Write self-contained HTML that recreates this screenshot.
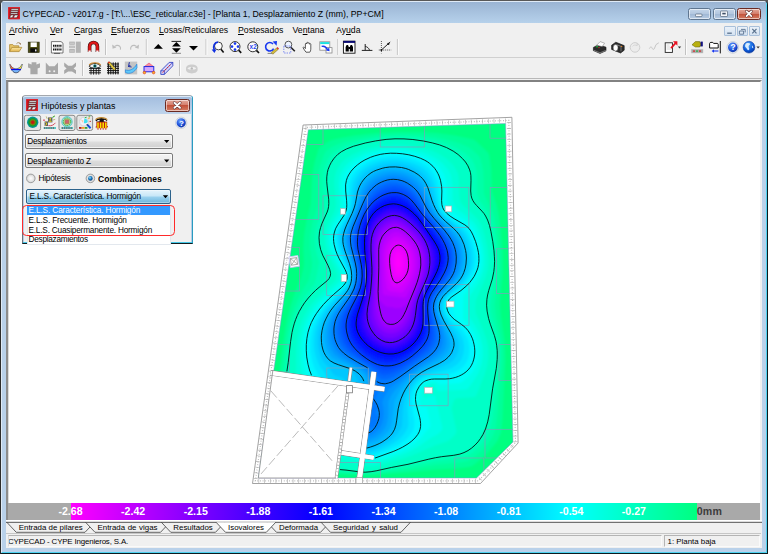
<!DOCTYPE html>
<html><head><meta charset="utf-8">
<style>
*{box-sizing:border-box;margin:0;padding:0}
html,body{width:768px;height:554px;overflow:hidden;background:#555}
body{font-family:"Liberation Sans",sans-serif;position:relative;font-size:8px;color:#000}
.abs,.mi,.sl,.tab,svg.ic{position:absolute}
#frame{left:0;top:0;width:768px;height:554px;background:#b9d1ea;border-radius:5px 5px 0 0;border:1px solid #2c2c2c;border-top-color:#585858;border-bottom-color:#0a1a1e;border-right-color:#0a1a1e}
#frame2{left:1px;top:1px;width:766px;height:552px;border-radius:4px 4px 0 0;border:1px solid #dfeaf6;border-bottom-color:#4dd2f0;border-right-color:#4dd2f0}
#titlegrad{left:2px;top:2px;width:764px;height:21px;background:linear-gradient(#9ab4d3,#b6d1eb)}
#title{left:22.5px;top:7px;font-size:8.75px;line-height:14px;white-space:nowrap;color:#000}
#menubar{left:6px;top:23px;width:756px;height:14px;background:#f0f0f0}
.mi{top:25px;font-size:8.7px;line-height:11px;white-space:nowrap;text-align:justify;text-align-last:justify;color:#000}
#tb1{left:6px;top:37px;width:756px;height:20px;background:#f0f0f0}
#tbsep{left:6px;top:57px;width:756px;height:1px;background:#d0d0d0}
#tb2{left:6px;top:58px;width:756px;height:22px;background:#f0f0f0}
#cborder{left:6px;top:80px;width:756px;height:442px;background:#fff;border-top:2px solid #828282;border-left:2px solid #8c8c8c;border-right:2px solid #f0f0f0}
#cborder2{left:6px;top:79px;width:756px;height:1px;background:#a0a0a0}
#scale{left:8px;top:503px;width:752px;height:17px;background:#a9a9a9}
#scalegrad{left:71px;top:503px;width:626px;height:17px;background:linear-gradient(90deg,#ff00ff 0%,#0000ff 40%,#00ffff 80%,#00ff80 100%)}
.sl{top:504.8px;font-weight:bold;font-size:10.6px;line-height:13px;color:#fff;white-space:nowrap;text-align:right;width:40px}
#tabs{left:6px;top:521px;width:756px;height:13px;background:#f0f0f0}
#status{left:6px;top:534px;width:756px;height:14px;background:#f0f0f0}
.vsep{position:absolute;width:1px;background:#c4c4c4;border-right:1px solid #fff;box-sizing:content-box}
.cap{position:absolute;border:1px solid #5f7690;border-radius:2.5px;background:linear-gradient(#c5d6ea 0%,#b4c8e0 45%,#9fb7d4 50%,#b9cde4 100%);box-shadow:inset 0 0 0 1px rgba(255,255,255,.55)}
.capx{background:linear-gradient(#e4a99c 0%,#d4806e 45%,#c2513a 50%,#d47d63 100%);border-color:#6b2a22}
.mdi{position:absolute;top:25.5px;height:10.5px;border:1px solid #a9c0da;background:linear-gradient(#eaf1f9,#d4e2f1);border-radius:1px}
.tab{top:523.2px;font-size:7.9px;line-height:10px;white-space:nowrap;text-align:justify;text-align-last:justify;color:#000}
.jt{white-space:nowrap;text-align:justify;text-align-last:justify}
.dt{font-size:8.25px;line-height:10px;color:#000;letter-spacing:-0.16px}
.combo{position:absolute;border:1px solid #7a7a7a;border-radius:2px;background:linear-gradient(#f4f4f4 0%,#ececec 48%,#dedede 52%,#d0d0d0 100%);box-shadow:inset 0 0 0 1px rgba(255,255,255,.7)}
.combo.hot{border-color:#2c628b;background:linear-gradient(#e6f4fc 0%,#c6e6f7 48%,#9cd2ef 52%,#6db6de 100%);box-shadow:inset 0 0 0 1px rgba(255,255,255,.35)}

</style></head><body>
<div id="frame" class="abs"></div>
<div id="frame2" class="abs"></div>
<div id="titlegrad" class="abs"></div>
<svg class="ic" style="left:7.500px;top:7.400px" width="12.200" height="12.200" viewBox="0 0 12 12"><rect x="0" y="0" width="12" height="12" rx=".8" fill="#cc141e"/><rect x=".4" y=".4" width="11.200" height="11.200" rx=".8" fill="none" stroke="#f04048" stroke-width=".5"/><g fill="#f2f6f6" stroke="#1a1a1a" stroke-width=".45" stroke-linejoin="round"><path d="M3.400 1.700h7.200l-.7 1.500H2.700z"/><path d="M3 3.800h7.200l-.6 1.400H2.400z"/><path d="M2.800 5.800h7l-.6 1.400H2.200z"/><path d="M2.900 7.900h2.800L4.100 10.600H1.500z"/><path d="M6.700 7.900h3.400L8.500 10.600H5.300z"/></g></svg>
<div id="title" class="abs">CYPECAD - v2017.g - [T:\...\ESC_reticular.c3e] - [Planta 1, Desplazamiento Z (mm), PP+CM]</div>
<div class="cap" style="left:687.5px;top:7.5px;width:23px;height:12.5px"></div>
<div class="cap" style="left:712.5px;top:7.5px;width:23px;height:12.5px"></div>
<div class="cap capx" style="left:737px;top:7.5px;width:24px;height:12.5px"></div>
<svg class="ic" style="left:687px;top:7px" width="75" height="14" viewBox="0 0 75 14"><rect x="8.5" y="7" width="6.5" height="2.6" rx=".8" fill="#f4f6fa" stroke="#55657a" stroke-width=".7"/><rect x="33.5" y="4" width="7" height="5.5" rx=".6" fill="#f4f6fa" stroke="#55657a" stroke-width=".7"/><rect x="35.3" y="5.8" width="3.4" height="1.6" fill="#3e4f66"/><path d="M59.500 4.300l4.800 4.800M64.300 4.300l-4.800 4.800" stroke="#5a3030" stroke-width="2.800" stroke-linecap="round"/><path d="M59.500 4.300l4.800 4.800M64.300 4.300l-4.800 4.800" stroke="#fff" stroke-width="1.700" stroke-linecap="round"/></svg>
<div id="menubar" class="abs"></div>
<div class="mi" style="left:9px;width:30.5px"><u>A</u>rchivo</div>
<div class="mi" style="left:50px;width:13px"><u>V</u>er</div>
<div class="mi" style="left:74px;width:27px"><u>C</u>argas</div>
<div class="mi" style="left:111px;width:37.5px"><u>E</u>sfuerzos</div>
<div class="mi" style="left:159px;width:68.5px"><u>L</u>osas/Reticulares</div>
<div class="mi" style="left:238px;width:44.5px"><u>P</u>ostesados</div>
<div class="mi" style="left:292.5px;width:32.5px">Ve<u>n</u>tana</div>
<div class="mi" style="left:336px;width:25px">Ay<u>u</u>da</div>
<div class="mdi" style="left:724px;width:11.5px"></div>
<div class="mdi" style="left:736.5px;width:11.5px"></div>
<div class="mdi" style="left:748.5px;width:11.5px"></div>
<svg class="ic" style="left:724px;top:25px" width="37" height="12" viewBox="0 0 37 12"><path d="M3.2 8.2h4.6" stroke="#5a728e" stroke-width="1.3"/><path d="M17 4.4h4.2v3M15.4 6h4.2v3.2h-4.2z" fill="none" stroke="#5a728e" stroke-width=".9"/><path d="M28.3 3.8l4.2 4.6M32.5 3.8l-4.2 4.6" stroke="#5a728e" stroke-width="1.2"/></svg>
<div id="tb1" class="abs"></div>
<div id="tbsep" class="abs"></div>
<div id="tb2" class="abs"></div>
<svg class="ic" style="left:6px;top:37px" width="756" height="42" viewBox="6 37 756 42">
<defs>
<radialGradient id="gHelp" cx=".4" cy=".3" r=".8"><stop offset="0" stop-color="#6aa0ff"/><stop offset=".6" stop-color="#1c4fd8"/><stop offset="1" stop-color="#0a2a90"/></radialGradient>
<radialGradient id="gGlobe" cx=".4" cy=".3" r=".8"><stop offset="0" stop-color="#58b0ff"/><stop offset=".6" stop-color="#0a58d8"/><stop offset="1" stop-color="#022a8c"/></radialGradient>
<linearGradient id="gFold" x1="0" y1="0" x2="0" y2="1"><stop offset="0" stop-color="#fbe9a8"/><stop offset="1" stop-color="#e2b24a"/></linearGradient>
</defs>
<!-- separators tb1 -->
<g stroke="#c2c2c2" stroke-width="1"><path d="M45.7 39v16M105.5 39v16M146.3 39v16M206 39v16M337.8 39v16M397.4 39v16M685.5 39v16M82.5 60v16M179.5 60v16"/></g>
<g stroke="#fbfbfb" stroke-width="1"><path d="M46.7 39v16M106.5 39v16M147.3 39v16M207 39v16M338.8 39v16M398.4 39v16M686.5 39v16M83.5 60v16M180.5 60v16"/></g>
<!-- open folder -->
<path d="M9.6 51.6V44.6h3.2l1 1.2h5v2" fill="#e8c66a" stroke="#a98328" stroke-width=".7"/>
<path d="M9.6 51.6l2.2-4.2h10l-2.6 4.2z" fill="url(#gFold)" stroke="#a98328" stroke-width=".7"/>
<path d="M16.5 43.6c1.2-1.2 2.6-1.2 3.6-.2" fill="none" stroke="#8a6a30" stroke-width=".7"/><path d="M19.2 43.2l1.6 0-.2 1.7z" fill="#7a4a20"/>
<!-- floppy -->
<rect x="28.2" y="42.1" width="11" height="10.4" fill="#4c4c12" stroke="#22220a" stroke-width=".6"/>
<rect x="30.6" y="42.4" width="6.2" height="4.6" fill="#fff"/>
<rect x="30.3" y="48.3" width="7" height="4" fill="#0a0a0a"/><rect x="35" y="49.4" width="1.5" height="2" fill="#e8e8e8"/>
<!-- doc icon -->
<path d="M51.4 41.6h9.6l2 1.6v9.8h-11.6z" fill="#fff" stroke="#555" stroke-width=".8"/>
<g stroke="#111" stroke-width="2" stroke-dasharray="1.300 .500"><path d="M53 45.800h8.600M53 49.600h8.600"/></g><path d="M53 47.700h8.600" stroke="#999" stroke-width=".5"/>
<path d="M54 53.4h6" stroke="#444" stroke-width=".8"/>
<!-- grey disabled icon -->
<g fill="#b4b4b4"><rect x="69.2" y="41.6" width="5.6" height="3.2"/><rect x="69.2" y="45.6" width="5.6" height="2.6"/><rect x="69.2" y="49" width="5.6" height="3.8"/><rect x="75.8" y="41.6" width="5" height="11.2"/></g>
<g stroke="#e6e6e6" stroke-width=".6"><path d="M70 43.2h4M70 47h4M70 51h4"/></g>
<!-- magnet -->
<path d="M89.6 52V46.4a3.9 3.9 0 0 1 7.8 0V52" fill="none" stroke="#3a0808" stroke-width="3.6"/>
<path d="M89.6 52V46.4a3.9 3.9 0 0 1 7.8 0V52" fill="none" stroke="#e01818" stroke-width="2.5"/>
<path d="M89.6 52.4V50.6M97.4 52.4V50.6" stroke="#f4f4f4" stroke-width="2.3"/>
<!-- undo / redo -->
<path d="M120.4 49.6c.8-2.6-1.2-4.6-3.6-4.2l-2 .8" fill="none" stroke="#bdbdbd" stroke-width="1.1"/><path d="M112.2 44.6l.4 4.2 3.8-1.2z" fill="#bdbdbd"/>
<path d="M130.8 49.6c-.8-2.6 1.2-4.6 3.6-4.2l2 .8" fill="none" stroke="#bdbdbd" stroke-width="1.1"/><path d="M139 44.6l-.4 4.2-3.8-1.2z" fill="#bdbdbd"/>
<!-- triangles -->
<path d="M158.3 44l4.6 4.8h-9.2z" fill="#000"/>
<path d="M171.5 41.4h9.6" stroke="#222" stroke-width="1"/><path d="M176.4 42l4.4 4.5h-8.8z" fill="#000"/><path d="M172 48.3h8.8l-4.4 4.5z" fill="#000"/><path d="M171.8 53.3h9.2" stroke="#8a8a8a" stroke-width="1"/>
<path d="M189 46.1h9l-4.5 4.5z" fill="#000"/>
<!-- zoom icons -->
<circle cx="218.4" cy="46" r="3.9" fill="#fdfdfd" stroke="#444" stroke-width="1"/><path d="M221 49.2l2.6 3.2" stroke="#111" stroke-width="1.6"/>
<path d="M218 42.2c-3.4.2-5.4 3.6-3.8 8" fill="none" stroke="#1030e0" stroke-width="1.7"/><path d="M211.6 49.4l4.8 0-2 3.6z" fill="#1030e0"/>
<circle cx="235" cy="46.6" r="5" fill="#fdfdfd" stroke="#333" stroke-width="1"/><path d="M238.6 50.2l2.6 2.6" stroke="#111" stroke-width="1.7"/>
<g fill="#1838f0"><circle cx="235" cy="43.6" r="1.3"/><circle cx="235" cy="49.6" r="1.3"/><circle cx="232" cy="46.6" r="1.3"/><circle cx="238" cy="46.6" r="1.3"/></g>
<circle cx="252.8" cy="46.8" r="5" fill="#fdfdfd" stroke="#333" stroke-width="1"/><path d="M256.4 50.4l2.6 2.6" stroke="#111" stroke-width="1.7"/>
<text x="249.6" y="49.2" font-size="6.4" font-weight="bold" fill="#2848f0" font-family="Liberation Sans">x2</text>
<path d="M273.6 48.6a4.2 4.2 0 1 1-.6-4.6" fill="none" stroke="#1838f0" stroke-width="1.6"/><path d="M272.6 41.4l4.4-.4-.4 4.8z" fill="#1838f0"/>
<path d="M271.4 52.6l5.2-4.6 1.4 1.6-5.2 4.6z" fill="#d8c040" stroke="#6a5a10" stroke-width=".5"/><path d="M276.6 48l1-.9 1.4 1.6-1 .9z" fill="#e02020"/><path d="M267.6 53.4h4.4" stroke="#666" stroke-width=".8"/>
<circle cx="288.4" cy="44.6" r="3.4" fill="#eef4ff" stroke="#555" stroke-width="1"/><path d="M290.8 47.2l4 4" stroke="#222" stroke-width="1.6"/>
<rect x="283.8" y="46" width="7" height="7" fill="none" stroke="#7080f0" stroke-width=".9" stroke-dasharray="1.4 1"/>
<!-- hand -->
<path d="M306 52.2c-1-1.4-2.2-3-2.8-4.2-.4-.8.6-1.4 1.2-.6l1 1.2V44c0-.9 1.2-.9 1.3 0v-1c0-.9 1.3-.9 1.4 0v.4c0-.9 1.3-.9 1.4 0v.8c0-.8 1.2-.8 1.3 0v5c0 1.400-.5 2.200-1 3z" fill="#fff" stroke="#333" stroke-width=".8" stroke-linejoin="round"/>
<!-- image icon -->
<rect x="319.8" y="41.8" width="10" height="8.400" fill="#fff" stroke="#8a8a8a" stroke-width=".8"/><rect x="320.200" y="42.100" width="9.200" height="2" fill="#18e0e0"/>
<rect x="326" y="47.600" width="6" height="5.400" fill="#fff" stroke="#8a8a8a" stroke-width=".8"/>
<path d="M321.600 46.400c2.400-.8 4.400.2 6 3.400" fill="none" stroke="#1838f0" stroke-width="1.500"/><path d="M326 50.600l3.600.6-.4-3.600z" fill="#1838f0"/>
<!-- binoculars -->
<rect x="343.400" y="41.200" width="11.600" height="12" fill="#fff" stroke="#111" stroke-width=".9"/><rect x="343.400" y="40.900" width="11.600" height="2" fill="#080870"/>
<path d="M345.600 51.400v-4.400l1-2h1.400l.8 2v4.400zM349.800 51.400v-4.400l.8-2h1.400l1 2v4.400z" fill="#000"/><rect x="348.400" y="47" width="1.800" height="2" fill="#000"/>
<!-- perp -->
<path d="M361.800 50.400h10.600M365.200 44v6.400" stroke="#222" stroke-width="1"/><path d="M365.200 46.400c2.200.4 3.800 1.800 4.400 4" fill="none" stroke="#222" stroke-width=".9"/>
<!-- dotted -->
<path d="M381.400 41v12.400M378.800 50h12.400" stroke="#444" stroke-width=".9" stroke-dasharray="1 1"/><path d="M381.400 50l8.800-8" stroke="#222" stroke-width="1"/><circle cx="388.400" cy="43.800" r="1.100" fill="#111"/><circle cx="381.400" cy="50" r="1" fill="#111"/>
<!-- printer -->
<path d="M593.400 47.400l5-2.600 7.600 2.400v3.600l-6 2.600-6.600-2.800z" fill="#2c2c2c" stroke="#111" stroke-width=".6"/><path d="M596.600 45.200l3.600-3.600 4.400 1.600-2.400 3.400z" fill="#fff" stroke="#777" stroke-width=".5"/>
<path d="M594 50.400l6 2.400 5.800-2.400" fill="none" stroke="#999" stroke-width=".7"/><circle cx="597" cy="46.800" r=".8" fill="#20e040"/><circle cx="599" cy="47.600" r=".7" fill="#f04020"/>
<!-- plotter -->
<path d="M611.600 45.200l4.200-3 8.400 3.400v4.600l-3.600 2.800-9-3.600z" fill="#2c2c2c" stroke="#111" stroke-width=".6"/><ellipse cx="615.600" cy="47.800" rx="2.400" ry="3.200" fill="#fff" stroke="#555" stroke-width=".5"/><path d="M617 44.800l4 1.600v5" fill="none" stroke="#aaa" stroke-width=".6"/><circle cx="621.600" cy="46.400" r=".7" fill="#e08020"/>
<!-- grey C -->
<circle cx="635" cy="47.400" r="4.800" fill="#ececec" stroke="#cfcfcf" stroke-width="1"/><path d="M632.600 46.400c1-1.600 3-1.800 4.400-.6M636 43.800l2 .4-1 1.600" fill="none" stroke="#cfcfcf" stroke-width=".8"/>
<path d="M649.400 48.600c.6-2 2.400-2.200 3 0 .4 1.200 1.800 1 2.200-.6l1.400-3.400 2.800-1.800" fill="none" stroke="#c6c6c6" stroke-width="1"/>
<!-- doc red arrow -->
<rect x="665.200" y="42.800" width="7.200" height="9.600" fill="#fff" stroke="#222" stroke-width=".9"/><path d="M666.600 45h3M666.600 47h3.600M666.600 49h4.400" stroke="#bbb" stroke-width=".6"/>
<path d="M671 48.200l4.600-5" stroke="#e81020" stroke-width="1.700"/><path d="M673 41.200h4.400v4.600z" fill="#e81020"/>
<path d="M677.800 46.600h3.400l-1.700 2z" fill="#333"/>
<!-- colour icon -->
<path d="M692 44.800l3.400-3.200h4.400v1.200h1.400v3.200h-1.400v1h-4.400l-3.400-2.200z" fill="#b8b010" stroke="#5a5a08" stroke-width=".5"/><rect x="700.600" y="41.600" width="2.200" height="4.800" fill="#101080"/>
<rect x="691.200" y="49.200" width="11.800" height="3.800" fill="#a8a8a8" stroke="#c8c8c8" stroke-width=".5"/><circle cx="694" cy="51.100" r=".9" fill="#e02020"/><circle cx="697" cy="51.100" r=".9" fill="#20b040"/><circle cx="700" cy="51.100" r=".9" fill="#e02020"/>
<!-- folder arrow -->
<path d="M709.600 48v-4.600c0-.6.600-1 1.200-1h2l.8 1h3.600c.6 0 1 .4 1 1v3.600z" fill="#fff" stroke="#111" stroke-width="1"/><path d="M720.300 41v12.400" stroke="#111" stroke-width="1"/><path d="M718.400 51h-5" stroke="#1838f0" stroke-width="1.100"/><path d="M711.600 51l2.400-1.800v3.600z" fill="#1838f0"/>
<!-- help -->
<circle cx="732.800" cy="47.400" r="5.900" fill="#e6ecf4" stroke="#b8c0cc" stroke-width=".6"/><circle cx="732.800" cy="47.400" r="4.800" fill="url(#gHelp)"/>
<text x="730.400" y="50.400" font-size="8.400" font-weight="bold" fill="#fff" font-family="Liberation Sans">?</text>
<!-- globe -->
<circle cx="749" cy="47.200" r="5.900" fill="url(#gGlobe)" stroke="#0a3aa0" stroke-width=".5"/>
<path d="M746 43.600c1.600-.8 3.200-.6 4.200.2-.2 1.200-1.400 1.400-1.600 2.600-.2 1.200 1 1.600.6 3-.6 1.200-1.600 1-2-.2-.4-1.400-1.800-1.600-2.200-3 .2-1.200.4-2 1-2.600z" fill="#dff0ff" opacity=".95"/><path d="M752 45.400c1 .6 1.400 1.800 1.200 3l-1.200-1z" fill="#dff0ff" opacity=".9"/>
<path d="M756.400 46.600h3.400l-1.700 2z" fill="#333"/>
<!-- TB2 -->
<path d="M9.800 64.200c.8 5.600 3.400 8.600 6.200 8.600s5.400-3 6.200-8.600c-1.600 2.600-3.600 4.800-6.200 4.800s-4.600-2.200-6.200-4.800z" fill="#78b8f8" stroke="#283050" stroke-width=".7"/>
<path d="M9.800 64.200c.4 1.800 1 3.600 1.800 5l2.400-.6c-1.800-1-3.200-2.800-4.200-4.400z" fill="#f06830"/><path d="M22.200 64.200c-.4 1.800-1 3.600-1.800 5l-2.400-.6c1.800-1 3.200-2.800 4.200-4.400z" fill="#f4e040"/>
<path d="M11 69.500h10" stroke="#0808f0" stroke-width="1.200"/>
<g fill="#a8a8a8">
<path d="M31.600 62.200h4.800v2.400l3.600-1.400v4.200l-2.400 1.200v5.600h-7.200v-5.600l-2.400-1.200v-4.200l3.600 1.400z"/>
<path d="M45.800 62.600l3.400 3.600h5.400l3.400-3.600v11.400h-12.200z"/>
<path d="M64.200 62.600l4 3.200h3.800l4-3.200v3.600l-2.400 2.400 2.400 1.600v3.800l-4-2.400h-3.800l-4 2.400v-3.800l2.400-1.600-2.400-2.400z"/>
</g>
<circle cx="49.600" cy="71.200" r="1" fill="#f0f0f0"/><circle cx="54.200" cy="71.200" r="1" fill="#f0f0f0"/>
<!-- eye grid -->
<g stroke="#111" stroke-width=".9"><path d="M89 68.400h12M89 70.600h12M89 72.800h12M91 67v7.600M93.600 67v7.600M96.200 67v7.600M98.800 67v7.600"/></g>
<path d="M89.200 66.200c2-3.600 9.400-3.600 11.400 0-2 2.600-9.400 2.600-11.400 0z" fill="#f4f4f4" stroke="#111" stroke-width=".9"/><path d="M89.200 65c2-3 9.400-3 11.400 0" fill="none" stroke="#c88020" stroke-width="1.100"/><circle cx="94.900" cy="66" r="1.700" fill="#108080"/><circle cx="94.900" cy="66" r=".8" fill="#000"/>
<!-- grid pencil -->
<g stroke="#111" stroke-width="1"><path d="M107 64h12M107 66.200h12M107 68.400h12M107 70.600h12M107 72.800h12M108.400 62.400v12M110.800 62.400v12M113.200 62.400v12M115.600 62.400v12M118 62.400v12"/></g>
<path d="M107.800 62.600l1.400-1 6.400 7.400-1.600 1.200z" fill="#e8d040" stroke="#6a5a10" stroke-width=".4"/><path d="M107.800 62.600l1.400-1 .9 1-1.500 1z" fill="#e02020"/>
<!-- blue slab -->
<rect x="124.800" y="61.600" width="12.400" height="12.800" fill="#c4c4c4"/><path d="M125.400 69.800c3.600 1.600 8.400-.4 11.400-5.600l.2 3.400c-2.400 4.800-7.400 7.200-11.600 4.800z" fill="#60c8f8" stroke="#1878d8" stroke-width=".6"/><path d="M129.400 62.200l-.8 3.600 1.800-.2M128 66.400l3.600.6" fill="none" stroke="#1020a0" stroke-width=".9"/>
<!-- trapezoid -->
<path d="M149 63l4.400 3.400h-8.800z" fill="#f890a8" stroke="#e03050" stroke-width=".5"/><rect x="144" y="66.600" width="9.800" height="5.200" fill="#d4a8fc" stroke="#1020e0" stroke-width=".9"/><circle cx="144.400" cy="72.600" r="1.300" fill="#f8c020" stroke="#e02020" stroke-width=".6"/><circle cx="153.600" cy="72.600" r="1.300" fill="#f8c020" stroke="#e02020" stroke-width=".6"/>
<!-- beam -->
<path d="M160.800 70.800l8.400-8.400h3.600v3.400l-8.400 8.600h-3.600z" fill="#d8d8f8" stroke="#2030c0" stroke-width=".8"/><path d="M160.800 70.800h3.600v3.600M164.400 70.800l8.400-8.400" fill="none" stroke="#2030c0" stroke-width=".7"/><path d="M162.600 72.600l8.400-8.600" stroke="#e02030" stroke-width=".9" stroke-dasharray="2 1"/>
<!-- grey eye -->
<path d="M186 68.400c0-2.600 2.600-4 5.800-4s5.800 1.400 5.800 4v1.400c0 2.200-2.600 3.600-5.800 3.600s-5.800-1.400-5.800-3.600z" fill="#cdcdcd"/><path d="M187.400 68.400c1.600-1.800 7.200-1.800 8.800 0-1.600 1.600-7.200 1.600-8.800 0z" fill="#f0f0f0"/><circle cx="191.800" cy="68.400" r="1.200" fill="#b8b8b8"/>
</svg>

<div id="cborder" class="abs"></div>
<div class="abs" style="left:6px;top:78px;width:756px;height:1px;background:#b8b8b8"></div><div class="abs" style="left:8px;top:82px;width:1px;height:421px;background:#dcdcdc"></div>
<svg class="ic" style="left:240px;top:105px" width="290" height="390" viewBox="240 105 290 390">
<defs><clipPath id="slab"><polygon points="308.3,129.8 505.6,123.5 513.0,442.0 476.5,478.0 258.3,478.0"/></clipPath><filter id="bl" x="-5%" y="-5%" width="110%" height="110%"><feGaussianBlur stdDeviation="0.9"/></filter></defs>
<polygon points="303.1,125.0 511.9,117.3 518.1,443.0 480.5,483.5 252.5,483.5" fill="#fff" stroke="#8c8c8c" stroke-width=".8"/>
<polygon points="305.7,127.4 508.8,120.4 515.5,442.5 478.5,480.8 255.4,480.8" fill="none" stroke="#a8a8a8" stroke-width="4.2" stroke-dasharray=".6 5.1"/>
<polygon points="305.7,127.4 508.8,120.4 515.5,442.5 478.5,480.8 255.4,480.8" fill="none" stroke="#b0b0b0" stroke-width="1.2" stroke-dasharray=".8 1.85" stroke-dashoffset="1.3"/>
<g clip-path="url(#slab)">
<rect x="240" y="105" width="290" height="390" fill="#00ff80"/>
<g filter="url(#bl)"><path fill="#00ff98" d="M395.0 132.0l22 0 19 1.1 19 2.5 18 3.7 2.9 1.7 10.5 10 1.9 2 1 2 2 14 0.7 23 4.3 12 2.6 11 1.8 14 1.9 24 0 21-2.2 21-0.3 10 0.7 10 3.8 26 0.7 19-2.8 59-1.3 13-3.7 9-6.6 8-5.9 6.2-7 6.4-5 3.9-3 1.3-11 1.4-22 1.2-30 3.1-39 3-32-1.1-2.4-0.4-4.6-1.7-12-0.4-2-1.1-7-6.5-3-2-13-0.3-2-0.3-2-1.6-8.7-10.1-0.7-1-0.5-2 1.2-10-1.6-14 0.6-9-0.1-19 1.4-11-1.1-7 5.1-38 2.8-17 3.5-14 3.4-11 7.9-20 2.4-10 0.3-3-0.6-14 0.8-15 2.4-14 4.1-16 1.6-28 1.1-8 1.4-7 3.5-12 0.8-1.7 2-1.8 9-6 10-2.6 14-2.3 23-2.6z"/>
<path fill="#00ffa8" d="M388.3 135.0l13.7-0.4 15 0.6 18 1.9 11 2.1 13 3.9 11 4.6 8.8 8.3 1.4 2 1.7 6 1.3 7 0.4 6 0.2 16 1.9 5 6.3 12 2.3 7 2.5 13 2.5 23 0.3 11-0.5 9-1.4 10-2.3 12-0.6 10 1.1 11 4.1 18 1.2 7 0.8 9 0.1 9-0.5 10-2.1 18-1.8 25-1.4 12-1.1 6-1.8 5-1.5 3-3.5 5-5.2 6-5.2 5.1-6 4.7-4 2.1-9 1.9-22 1.9-30 4.7-35 4.4-10 0.3-25-1.7-7-3.1-8-0.3-3-1-15-13.8-2-0.7-7-0.3-2-0.9-4.7-5.3-1.3-2-0.1-2 0.5-5-0.3-3-1.1-8-2.4-10-0.6-4-0.2-19 1-10-1.9-9 4.9-38 2.6-14 4.3-14 4.3-10.1 4.7-8.9 6.1-10 3-13 0.4-4-2.2-14-0.2-8 0.4-7 2.1-11 4.6-14 0.9-4 0.3-6-0.4-18 1-10 2-8 4-10 1.6-2 5.7-4.2 6-2.8 6-2 8-2 11-2 14-2z"/>
<path fill="#00ffb8" d="M392.5 137.0l14.5 0 14 1.2 14 2.3 11 3 10.8 4.5 9.5 6 6 6 2.3 5 1.5 5 0.7 5-0.1 15 0.4 4 2.9 7 7.1 10 2.2 4 1.5 4 2.9 12 2 13 0.9 9 0.3 10-0.6 9-1.3 8-3.7 15-0.8 10 0.4 6 1 6 4.9 17 1.6 7 0.9 8 0.2 9-0.7 10-2.8 19.1-3.4 30.9-2.7 12-2.2 5-3.1 5-4.6 5.7-5 4.9-6 4.3-4 1.8-8 1.9-21 2.4-29 5.8-34 5.6-11 0.5-23-2.1-2-0.6-7-3.5-6-0.5-2-0.7-18-16.9-3-2-4-0.9-1.8-1.7-1.1-2-0.1-4-0.8-5-6.2-24.3-0.4-15.7 0.7-9-2.6-11 4.8-38 2.9-13 1.9-6 2.7-6.4 4-7.6 4-6.3 9.3-11.7 1.4-4 3.5-17-0.3-2-2-6-1.4-6-0.7-7 0.1-7 0.7-5 1.2-5 5.4-14 1.1-4 0.5-7-1.2-15 0.1-9 1.5-8 3.2-8 3.1-5 3.5-3.1 5-3.3 7-3.1 9-2.7 15-3.2 11-1.6z"/>
<path fill="#00ffc7" d="M394.0 139.0l10 0 5 0.7 7 0.3 2 0.7 5 0.3 2 0.8 3 0.2 1 0.6 7 1.4 1 0.7 5 1.3 1 0.7 2 0.3 1 0.9 1 0.1 1 0.8 3 1.2 1 0.9 1 0.1 8 6 5.9 7 0.2 1 0.9 1 0.1 1 0.9 1 0.3 2 0.7 1 0.2 3 0.8 2.9 0 6.1-0.6 4 0 4 0.9 6 0.7 1 0.1 1 0.9 1 0.1 1 0.9 1 0.3 1 6.7 7 4 5 0.1 1 1.9 3 0.1 1 0.9 1 0.2 2 0.8 1 0.1 2 0.9 2 0.3 3 0.7 1.7 0.3 3.3 0.7 1.9 0.3 4.1 0.7 1.9 0.3 5.1 0.7 2.9 0 18.1-0.7 2-0.3 4-0.6 1-0.4 3-0.7 1-0.3 2-0.6 1-0.4 2.1-1.8 4.9-0.2 2-0.9 2-0.1 3-0.8 3 0 7 0.2 2 0.6 1 0.2 4 0.8 1.9 0.2 2.1 3 9 0.8 1 0.2 2 0.8 1 0.3 2 0.7 1 0.2 2 0.8 1.6 0.2 2.4 0.8 2 0.2 5 0.8 5-0.1 5-0.6 4-0.3 6.1-0.8 2.9-0.2 3.1-0.8 1.9-0.2 3.2-0.7 1.8-0.3 4-0.9 2-0.1 4-0.9 3-0.1 5-0.8 2-0.2 6-0.7 1-0.3 3-0.9 2-0.1 4-0.7 1-0.3 3.1-0.9 1.9-0.1 2-0.8 1-0.2 2-0.9 1-0.1 1.1-3 5.9-0.8 1-0.2 1-2 3-7 7-1 0.3-2 1.7-1 0.2-2.9 1.8-1.1 0.2-1 0.8-2 0.2-1 0.8-3 0.2-2 0.8-5 0.2-3 0.8-5 0.1-2.9 0.9-3.1 0.2-2 0.8-3 0.3-1 0.6-3 0.3-1.6 0.8-2.4 0.2-1 0.8-3 0.3-1 0.7-3 0.3-1 0.7-8 1.4-1 0.6-4 0.3-1.9 0.7-3.1 0.2-2 0.7-4 0.4-1 0.6-3 0.3-2 0.8-8 1.3-2 0.7-16.1 0-9.9-1.8-6.1-0.2-3.1-1-6.8-3.6-4-0.4-2.2-1-3.8-3-17-16.8-2.6-2.2-1.4-1.9-0.3-2.1-0.7-1-0.4-3-0.6-1-0.2-2-0.8-1.9-0.2-2.1-0.8-1-0.3-3-0.7-1-0.1-2-0.9-2-1.2-6-0.8-1-0.3-3-0.7-1-1-7 0-9 0.7-3 0.1-3-0.8-2-0.2-2-0.8-1.9-0.3-2.1-0.7-1-0.2-4 0.2-5 0.7-2 0.3-6 0.7-3 0.3-7 0.8-3 0.2-5.1 3-14.9 0.6-1 1.4-5 0.7-1 1.3-4 1.9-3 0.1-1 2.8-4 0.2-1 1.8-2 0.2-1 2.7-3 1.3-2 12.8-13 0.2-1 1.9-2 0.1-1 1.6-2 0.4-2 1-1-0.1-7-0.8-2-0.4-4-0.7-1-0.1-1-0.9-1-0.1-1-2.8-6-0.3-2-0.8-1.9-0.3-3.1-0.7-2 0-9 0.7-2 0.3-3.1 2-5.9 0.8-1 3.3-8 0.8-1 1-3 0.1-2 0.6-1 0.2-9-0.8-3-0.2-5-0.8-3.7 0-12.3 0.6-1 0.4-3 0.6-1 0.4-2 0.8-1 1.2-3 0.9-1 0.1-1 4.2-5 4.8-4 1-0.2 4.8-2.8 4.9-2 10.2-3 7.1-1.4 1-0.6 10-1.3 2-0.7 6-0.2z"/>
<path fill="#00ffd7" d="M386.5 145.0l10.5-0.5 12 0.8 12 2.1 11 3.4 8 3.7 7 4.6 6 5.9 3.9 6 1.2 3 0.8 4 0.5 18 0.9 5 0.9 2 1.6 2 13 12 3.8 5 2 4 1.7 5 2 7 1.9 9 1.1 12-0.1 6-0.7 5-1.2 5-1.7 5-8.8 20-0.5 10 0.7 4 6.7 15 3.7 10 1.6 8 0.3 9-1.1 9-2.4 9-6.8 17.5-2.2 4.5-0.8 0.8-2 0.5-16 1-2.2 0.7-0.7 1-2.3 7-0.1 2 4.6 21 0.2 2-0.9 2-2.7 3-3.3 3-2.6 1.5-12 3.9-14.7 6.6-10.3 4.2-9 2.9-23 6.2-6 0.9-13-1.2-9-2.5-7-1.1-9-2.6-2.6-1.8-10.8-12-9.3-7-0.8-2-1.8-11-8.2-27-2.3-9-2.2-18 0.2-20 1-12 1.7-9 2.8-9 3.8-8 3.8-6 5.5-7 6.2-6.3 12.1-10.7 2.4-3 1.3-3 0-3-1.5-5-6.7-14-1.9-5-1.5-6-0.4-6 0.4-5 1.3-5 2.1-5 5.4-10.5 1.7-5.5 0.1-6-1.3-14-0.1-6 0.7-6 1.7-5 2.9-5 3.3-3.9 4-3.4 5-3 9-3.9 8-2.6 8-1.8z"/>
<path fill="#00ffe7" d="M390.7 148.0l7.3 0 8 0.6 7 1.1 8 1.9 6 2 6 2.8 4.3 2.6 5 4 5.2 6 2.4 4 1.2 3 1.2 8 0.4 16 0.5 2 1.7 4 3.7 4 14.1 11 2.5 3 2.7 5 3.2 9 2.5 10 1 9-0.2 8-1.4 7-2.6 7-3.7 7-6.8 10-0.9 2-0.4 16 0.8 3 5.4 8 3.1 6 2.5 6 2.2 9 0.4 9-1.3 9-3.3 9-5.4 8.9-3 4.2-3 3.1-3 0.6-26 1.1-1.4-0.9-1.6-4.3-1-1-1-0.2-2 0.3-3 1.2-2 1.3-1.4 1.7-0.8 2-0.1 3 0.1 3 0.7 1 1.5 0.1 7-3 1 0 1 0.8 0.4 1.1 7.1 31-0.6 2-3.6 4-7.3 3.8-13 9.2-10 5.2-8 3.1-7 2.2-16 4.9-4 0.6-11-1.3-10-3.5-7-1.4-5-1.6-1.6-1.2-7.8-8-10.6-7.1-2.3-1.9-0.8-2-2.9-18.5-8.4-27.5-3.2-9-2.1-19 0-15 1.1-10 1.8-8 2.9-8 3.7-7 4.8-7 5.2-6 18.1-17 2.1-3 0.7-2 0.1-3-1.2-4-7.1-15-2.4-6-1.5-6-0.4-6 0.5-5 1.4-5 2.3-5 5.7-10 1.7-5 0.3-6-1.2-13-0.1-6 0.8-6 1.7-5 3.1-5 3.7-4 4.9-3.7 5.8-3.3 6.2-2.7 9-2.9 9-1.7z"/>
<path fill="#00fff7" d="M387.1 151.0l7.9-0.3 7 0.4 7 1 7 1.6 6 1.9 5.6 2.4 4.4 2.6 4.3 3.4 5.2 6 2.3 4 1.6 4 1.3 9 0.2 14 0.8 3 2.2 5 1.7 2 3.4 2.8 11 7.3 3.7 2.9 2.7 3 2.8 5 3 8 2.4 9 1 8-0.3 8-1.7 7-3.3 7-4.7 7-7.9 9-0.4 3-0.3 19 0.3 2 0.7 1 6.4 7 2.6 4 2.4 5 1.8 5 0.9 4 0.5 9-1.3 8-1.4 4-2 4-2 3-2.9 3.3-7 5.8-3 1.2-18 1.3-2-0.7-2-2-2-0.4-3 0.1-3 0.8-3 1.3-2 1.4-2 2.2-1.3 2.7-1.2 6-0.2 3 0.4 3 1.3 3.9 1 1 4-0.2 1 1.3 3.7 17-1.1 3-3.6 3.5-5.8 7.5-4.2 3.7-4 2.8-10 5.4-9 3.5-16 5.4-4 0.5-10-0.7-9.2-4.6-7.8-2.4-6.9-5.6-13.8-9-2.3-2-0.8-2-3.6-24-6.2-20-5.2-12-0.9-3-2.5-16-0.4-13 0.9-9 1.8-8 2.5-7 3.6-7 3.3-5 4.8-6 6.7-7 13.2-12 2.3-3 1.4-3 0.3-3-1-4-7.8-16-2.7-7-1.4-6-0.3-5 0.6-5 1.5-5 2.1-4 6.1-10 1.9-5 0.4-6-1-12-0.2-6 0.6-5 1.5-5 2.9-5 3.4-4 4.2-3.5 5-3.2 6-3 7-2.6 7-1.7z"/>
<path fill="#00f7ff" d="M382.8 154.0l7.2-0.7 6 0 8 0.7 6 1.1 7.2 1.9 5.1 2 5.6 3 3.8 3 3.3 3.6 2.9 4.4 3.1 7.9 1.1 7.1 0.3 15 2.1 6 2.1 3 3.3 3 14.1 8.9 4 3.1 3 3.8 2 3.8 3 7.4 2.1 8 0.9 9-1 8.5-2 5.7-4 6.9-5 5.9-7.9 7-2.9 4-3 6-0.2 5 0.1 2 1.3 4 2.9 6 1.7 2 7 6 3 3.9 2 3.4 1.9 4.7 1.1 4 0.6 9-0.6 5.2-1.1 3.8-1.9 4-3 4-5 4.1-6 3-8 1.8-6 0.4-9-0.2-5 0.7-4 1.6-2 1.4-3.8 4.2-1.6 3-1.3 4-0.5 6 1.6 9 2.6 8 0.9 8-0.9 4.8-1 2.5-3 4.5-3 3.2-5.2 4-4.8 3-11 5-17 6-10 0-3.6-1-10.1-6-21.5-14-2.1-2-0.7-2-3.5-25-1.1-5-3.7-12-8.6-19-2.1-7.7-1.4-10.3-0.2-10 0.6-6.5 2-8.9 3-7.6 3.9-7 5.1-7 5-5.5 16.5-15.5 2.5-3.5 1.3-3.5 0.2-3-0.9-4-7.5-15-3.1-8-1-4-0.6-6 0.6-6 1-3.3 2.9-5.7 5.8-9 2-5 0.8-6-1-18 0.5-4.4 1-3.6 2-4 2.9-4 4-4 3.9-3 4.9-3 6.6-3 6.5-2z"/>
<path fill="#00e7ff" d="M386.4 157.0l5.6-0.4 6 0.2 6 0.7 6 1.2 6 1.9 5 2.1 4 2.3 4 3.1 2.6 2.9 2.1 3 3.2 7 1.6 7 1.4 16 0.8 3 1.4 3 2.2 3 3.7 3.6 13.8 9.4 3.7 3 3.1 4 2.5 5 3 9 1.6 9-0.3 8-1.8 7-3 6-4.6 6.1-5.1 4.9-9.9 7.5-3 3-2.1 3.5-0.9 4 0.3 3 0.7 2.5 3 5.6 3 3.4 10 9.2 3.7 5.3 1.8 4 1.2 4 0.6 4 0 5-1.1 6-2.2 4.9-3 3.8-4 3.2-5 2.6-4.8 1.5-5.2 0.9-11 1.2-6 1.6-3 1.4-2.7 1.9-4.3 4.6-2.1 3.4-1.6 4-1.3 7 0.3 8 2.1 13-0.2 6-0.9 3-1.3 2.5-4.6 5.5-3.4 3-5 3.4-11.1 5.6-13.9 5.2-9 0.3-3-0.9-7.2-4.6-1.8-1.6-2.4-3.4-13.8-9-1.8-1.4-1-1.6-5.5-37-1.5-4-8-16-4-6.8-2-5.2-1.5-6-1-6-0.3-6 0.2-6 1-7 1.6-6 2.4-6 3.3-6 4.2-6 5-6 16.1-15.8 2.2-3.2 1.6-4 0.3-4-0.7-4-1.4-3.8-5.8-12.2-2.3-6-1.6-6-0.4-6 0.7-5 1.3-4 8.1-14 2.2-6 0.7-6-0.1-15 0.4-4 1.2-4 2-4 2.9-4 4.1-4 4.6-3.4 5-2.8 5-2 6-1.7z"/>
<path fill="#00d7ff" d="M383.0 161.0l6-0.8 7-0.1 6 0.6 6 1.2 6 1.9 6 2.7 4 2.6 4 3.7 3 4.2 2.7 6 1.6 6 2.5 15 0.9 3 2 4 2.3 3.2 3.9 3.8 10.8 8 4.8 4 2.5 3 2 3.3 2.5 5.7 2 7 0.9 6 0.2 6-0.7 5-1.1 4-1.7 4-2.3 4-3 4-3.8 4-10 8.1-3 2.9-2.7 4-1.1 4 0.3 5 2.5 6.2 3 4.6 9.8 11.2 2.5 4 1.3 3 1.3 5 0.2 5-0.7 5-2 5-1.4 2.2-2.5 2.8-5.5 3.7-7 2.6-12 2.7-6 2-5 2.6-4.2 3.4-2.6 3-2.7 4-2 4-1.6 5-1 6-0.3 5 0.8 16-0.8 4-2.2 4-3.1 4-4.3 4-4.3 3-5.2 3-7.5 3.5-8 3-3 0.4-4 0.1-3-0.7-6.2-4.3-1.7-2-1.1-3.5-1-1.4-10.6-7.1-1.5-2-3.9-27 0-10-0.6-6-1.4-1.7-3-1.4-1-0.9-7.3-14-3.4-4-2.1-4-2.2-5.9-1.4-6.1-0.6-6 0.1-6 0.7-6 1.5-6 2.4-6 3.2-6 4-6 4.2-5 14.9-15.4 2.3-3.6 1.5-4 0.6-5-0.8-5-8.7-22-1.4-6-0.3-5 0.6-4 1.2-4 7.8-15 2.3-6 1-6 0.6-13 0.9-5 0.9-3 2.1-4 2.4-3.3 3-3.2 4-3.2 4-2.5 4-1.9 5-1.7z"/>
<path fill="#00c7ff" d="M386.1 164.0l5.9-0.5 5 0 5 0.6 6 1.4 5 1.8 5 2.6 4 2.8 3.5 3.3 2.5 3.6 2.2 4.4 1.8 5.4 3.6 14.6 1.6 4 2.1 4 2.7 3.5 3 3.1 10.3 8.4 4.3 4 2.5 3 2.4 4 2.2 5 1.7 6 0.9 6 0.1 6-0.6 5-1.1 4-1.6 4-2.3 4-4.8 6-11 9.6-3 3.2-2.6 4.2-1.1 4 0 3 0.5 3 2.2 5.7 3 5.3 8.5 12 2.6 6 0.8 4-0.1 4-0.7 4-1.7 4-3.1 4-4.3 3.4-6 2.9-11 3.9-7 3-5 3-5 4.4-2.9 3.4-2.7 4-2.5 5-1.9 5-1.3 5-0.7 5-0.9 17-1 3-2.9 5-2.5 3-3.1 3-7.6 5.1-6 2.9-6 2.4-3 0.8-4 0.1-2-0.6-5.1-3.7-1.4-2-1.6-6-0.9-1.2-5.6-3.8-1.6-2-2.6-18 0.8-15-1.5-18-0.5-1-1-0.8-8-2.8-2-1.2-4.3-7.2-3.7-3.4-2-2.7-2.5-4.9-1.8-6-0.9-6 0-7 0.6-5 1.2-5 1.8-5 3-6 3.1-5 3.8-5 14.7-16 2.4-4 1.4-4 0.7-5-0.5-6-1.5-5-6.7-18-1-5-0.2-5 0.8-5 1.3-4 6.9-14 2.3-6 1.2-5 1.6-13 1.9-7 2.2-4 2.2-3 3-3.2 4-3.2 4-2.3 4-1.8 5-1.5z"/>
<path fill="#00b7ff" d="M389.7 167.0l5.3-0.2 5 0.4 5 1.1 4 1.3 4 1.8 4.4 2.6 3.6 3 2.8 3 2 3 1.9 4 5.7 17 4 8 2.6 3.7 3 3.3 13.2 12 3.2 4 2.4 4 2.1 5 1.7 6 0.8 6-0.1 6-1.5 8-3.2 7-4.6 6-10 9.4-3.4 3.6-2.6 4-1.3 4 0 5 1.5 6 2.8 6.1 7.4 12.9 2.2 6 0.5 4-0.3 3-0.8 3-1.4 3-2.9 4-3.7 3.2-5 3-18 8.9-5.4 3.9-5.2 5-3.2 4-3.3 5-2.5 5-2 5-2.2 9-2 15-1.1 4-2 4-4.3 5-6.8 4.9-7 3.4-5 1.7-3 0.5-3-1.2-3.7-3.3-2.2-9-3.5-4-0.6-3-0.5-6 0.9-20 3.6-18 0.1-2-0.4-2-2-4-3.2-4-3.7-2-12.8-4.5-5.7-3.5-3.1-3-2.6-4-2.2-6-1-6 0-7 0.7-5 1.3-5 1.9-5 2.6-5 6.2-9 9.9-10.9 3-3.9 2.4-4.2 1.4-4 0.9-6-0.6-7-1.3-5-6.1-18-0.8-5-0.1-4 0.6-4 1.5-5 6.9-15 2.3-6 3.3-16 1.6-4.7 2.2-4.3 2.8-3.9 3-3.1 3.9-3 4.1-2.3 4-1.5 5-1.4z"/>
<path fill="#00a7ff" d="M392.4 170.0l8.6 0.7 8 2.4 7 4 3.4 2.9 2.6 3 3.5 6 6.1 16 4.4 8 5 6.2 13 12.8 3.1 4 2.4 4 2.1 5 1.5 6 0.7 6-0.2 6-1.8 8-2.9 6-3.7 5-9.2 9.2-4 4.5-2.6 4.3-1.2 4-0.1 5 1.3 6 2.6 6.3 5.7 11.7 2.2 7 0.3 3-0.2 2.7-1.9 5.3-2.9 4-3.2 3-6.3 4-16.7 9.3-6 4.7-6 6-7 9-5.5 10-2.6 21-1.4 5-2.1 4-4.6 5-5.8 4.1-4.1 1.9-5.9 1.4-2 0.2-2-1-1.4-1.6-2.5-11-2.3-26 0.3-3 1.2-4 7-15 0-2-1.4-3-1.9-2.5-5-4.2-6-3.3-15-6.4-4-2.4-2.3-2.2-3.2-5-2-6-0.9-6 0.2-7 1.8-8 3.9-9 5.3-8 9.2-10.7 3-4 2.3-4.3 1.8-5 0.8-6-0.4-7-1.5-6.3-5.3-16.7-0.9-5 0.1-5 0.7-4 1.6-5 8.6-20 5.1-18 2.1-4.2 2.7-3.8 3.3-3.4 4-3 4-2.2 5-1.8 5-1.1z"/>
<path fill="#0097ff" d="M385.6 174.0l4.4-0.7 5-0.2 5 0.6 4 1 4 1.5 4 2.2 4 2.9 3 2.9 4.5 6.8 5.9 14 4.6 8 5 6.4 13 13.6 4.8 7 2.2 5 1.6 6 0.7 6-0.1 5-1.6 8-2.6 6-3.5 5-9.5 10.1-3.3 3.9-2.7 4.7-1.3 4.3-0.2 5 1 5 6.9 18 1.7 6 0.3 6-1.6 5-2.8 4.1-4.2 3.9-5.9 4-12.9 7.6-8.4 6.4-7.6 7-9.7 10-3.9 7-1.1 3 0.1 10-0.4 6-1.3 6-1.7 3.9-4 5.1-5 4-4 1.9-5 0.8-1-0.2-1.4-1.5-2.3-8-1.6-18-0.1-5 0.6-5 1.8-7 3.5-8 3-5 0-2-1.5-3-2-2.9-1.8-2.1-2.5-2-6.7-4.1-15.8-7.9-5.2-4-3-4.5-2.1-5.5-1-6 0-6 1.4-8 3.1-8 5-8 11.7-15 2.6-5 1.8-6 0.7-6-0.5-7-1.4-6-4.3-14-1.3-7 0.3-7 2-7 7.7-18 5.7-17 3.3-6 4.3-5 4-3.2 5.3-2.8z"/>
<path fill="#0087ff" d="M386.7 177.0l4.3-0.7 4-0.1 4 0.5 4.8 1.3 4.2 1.8 4 2.5 3 2.4 3 3.1 3.5 5.2 6.2 13 4.2 7 5.1 6.4 12.3 13.6 4.8 7 2.3 5 1.7 6 0.6 5 0 6-1.3 7-2.9 7-3.5 5-11.3 13-2.9 5-1.4 4-0.4 5 0.6 5 5.9 18 1.2 6 0 6-1.7 5-3.7 5-4.5 4-18.3 12-16.5 13.2-9 6.6-5.6 10.2-1.1 3 1.1 6 0.4 6-0.7 6-1.7 5-2.5 4-3.7 4-3.2 2.1-4 0.9-1-0.2-1-0.9-2-5.9-0.8-15 0.1-4 0.9-7 2.5-10 2.1-5 4-6-0.1-2-2.8-5-4.1-5-6.2-4-15.9-9-4.2-3-3-3-2.5-4-2-5.4-1-5.6 0-6 1.2-7 2.7-7 4.2-7 8.3-11 3.2-5 2.4-5 1.8-6 0.6-7-0.5-7-1.3-6-4-14-1.1-7 0.4-6 2.2-8 6.9-16 5.4-14 1.9-4 2.5-4 3.6-4 4.6-3.6 5-2.6z"/>
<path fill="#0078ff" d="M387.8 180.0l7.2-0.6 4 0.5 4 1.2 4 1.8 4 2.6 5.9 5.5 3.1 4.4 6 11.6 3.8 6 4.8 6 11.4 13 5.5 8 2.4 5 1.5 5 0.9 6 0 5-1 7-2.7 7-3.2 5-11.4 14-2.8 5-1.3 4-0.4 5 0.5 4.7 4.8 17.3 0.8 5-0.2 6-2.1 6-1.9 3-2.4 2.8-6.3 5.2-11.7 7.8-19 13.6-5 2.7-5.4 1.9-3.8 2-6.5 12 0.6 4 1.4 4 0.3 2-0.6 2.4-1.3 1.6-0.2 1 1.5 1.4 1 2 0 3.6-1 3-2 3.3-2 1.5-3 1-1-0.2-2-2.7-1-1.9-0.4-2 0-3 0.4-2 1-1.8 2.6-2.2-2.6-3.9-0.2-4.1 1.2-3.5 3-3.5-0.3-4 0.3-3.1 1-1.9 4.6-5 0.4-1-0.5-2-3.2-6-5.3-6.3-20.6-12.7-4.4-3.4-3.4-3.6-3-5-1.7-5-0.9-5 0-6 1.1-6 2.2-6 3.5-6 11.2-16.7 2.4-5.3 1.6-6 0.7-7-0.5-7-1.1-6-3.7-14-1-7 0.3-6 2.2-8 11.1-26.3 2.4-4.7 2.6-3.9 3.6-4.1 4.4-3.4 5-2.7z"/>
<path fill="#0068ff" d="M389.6 183.0l3.4-0.3 4 0.2 7 2 6.9 4.1 5 5 2.9 4 5.6 10 3.3 5 16 19 5.5 8 2.4 5 1.6 5 0.9 5 0.1 5-0.9 7-2.6 7-3.7 6-10.1 13-2.8 5-1.4 4-0.7 5 0.3 5 4 18 0.5 5-0.6 6-2.2 5.3-3.5 4.7-4.4 4-22.1 15.5-7 4.3-5 2.6-4 1.3-4 0.5-3-0.5-2-0.9-1-0.9-2.5-3.9-6.1-6-16.1-10-5.3-3.9-3.4-3.1-3.1-4-2.5-5-1.6-6-0.4-6 0.9-7 2.1-6 3.2-6 10.5-17 2.2-5 1.5-6 0.7-7-0.5-7-4.6-20-0.8-7 0.5-7 2.2-8 9.1-21.1 3.9-6.9 2.9-4 4-4 4.2-3 5-2.5z"/>
<path fill="#0058ff" d="M392.4 186.0l3.6 0 3 0.5 6 2.2 5 3.1 5 5 10.6 16.2 15.2 18 5.6 8 2.6 5 1.9 5 1 5 0.3 6-1.1 7-2.7 7-3.8 6-9.6 13-2.2 4-1.4 4-0.8 5 0.1 5 2.8 16 0.6 7-0.8 6-2.2 5-2.9 4-4.2 4-7.7 6-10.3 7.1-6 3.4-7 3.3-5 1.6-4 0.3-2-0.3-2-0.9-3-3.3-3-1.9-2.4-2.3-14.3-9-6.4-5-3.1-3-3.8-5-2.2-5-1.4-6-0.3-6 0.7-5 1.8-6 3-6 9.7-17 2-5 1.5-6 0.6-6-0.3-7-1-6-3.3-14-0.9-8 0.8-8 2.6-9 3.7-9.2 4-8.2 4-6.4 3-3.7 4-3.8 5-3.3 6-2.5z"/>
<path fill="#0048ff" d="M388.3 190.0l6.7-0.7 6 1 3 1.2 4 2.3 5 4.5 10.5 14.7 14.4 17 5.8 8 3.2 6 1.9 5 1.1 5 0.3 5-1 7-2.7 7-3.4 6-9.8 14-2.1 4-1.2 3.5-0.8 4.5 0 5 2 16 0.3 6-0.8 6-2.1 5-2.8 4-4.9 5-6.9 5.7-7 4.8-6 3.3-6 2.5-5 1.4-5 0.6-3-0.5-15.2-8.8-7.2-5-7-6-4.2-5-2.7-5-1.9-6-0.7-7 0.5-5 1.6-6 2.6-6 9.2-17.2 2.1-5.8 1.3-6 0.4-6-0.3-6-4.1-20-0.7-7 0.6-8 2.2-9 2.6-7 2.9-6.2 3-5.3 4-5.4 4-4 4-3 5-2.7z"/>
<path fill="#0038ff" d="M389.4 193.0l5.6-0.5 6 1 6 3 5.2 4.5 10.8 14 13 15.3 5.5 7.7 3.3 6 1.9 5 1.1 5 0.3 5-0.8 6-2.5 7-3.9 7-8.9 13.3-2 3.8-1.3 3.9-0.7 4-0.2 5 1.3 16 0.1 6-1.1 6-2.3 5-2.9 4-4.8 5-5.1 4.4-6 4.2-5 2.8-6 2.3-5 1.1-5 0.3-3-0.3-5-1.4-7-3.3-7.7-5.1-7.3-6.3-4.6-5.7-3.1-6-1.7-6-0.5-7 0.5-5 1.4-5 2.1-5 8.4-17 2-6 1.2-6 0.4-6-0.3-6-3.6-19-0.8-8 0.8-9 2.3-9 2.5-6.7 2.6-5.3 3.2-5 3.2-3.8 4-3.7 4-2.7 5-2.5z"/>
<path fill="#0028ff" d="M389.0 196.0l4-0.6 3 0 6 1.5 6 3.4 5 4.8 19.6 23.9 7.2 10 2.8 5 2 5 1.2 5 0.3 4-0.9 7-2.5 7-3.8 7-8.3 13-3 7-0.8 4-0.3 4 0.9 17-0.1 6-1 5-2.1 5-3.2 4.7-4 4.3-5 4.3-5 3.6-5 2.6-5 2-5 1.1-5 0.3-6.7-0.9-6.3-2.4-7.6-4.6-7.4-6.2-4.2-4.8-3.5-6-1.9-6-0.8-7 0.5-5 1.3-5 9.6-22.1 1.8-5.9 1.1-6 0.4-6-0.3-6-3.2-19-0.6-7 0.6-9 2.2-9.5 4-9.7 3-4.9 3.2-3.9 3.8-3.5 4-2.8 4-2.1z"/>
<path fill="#0018ff" d="M388.1 199.0l3.9-0.7 3-0.1 6 1.3 6 3.1 6 5.3 12.7 15.1 12.4 17 2.8 5 1.6 4 1.2 5 0.4 4-0.7 6-2.3 7-3.6 7-8.4 14-2.8 7-1 8 0.6 15-0.2 6-1.2 6-2.2 5-2.7 4-3.6 4-4 3.6-5 3.5-4 2.2-5 2-5 1.2-5 0.4-6.9-0.9-6.1-2.3-6.5-3.7-6.5-5.2-5-5.6-3.1-5.2-2.1-6-0.7-6 0.4-5 1.2-5 8.4-21 1.9-7 1-6 0.4-6-0.2-6-2.6-18-0.7-8 0.5-8 1.9-9 1.7-5 2.3-5 2.7-4.3 3-3.6 3-2.8 4-2.8 4-2.1z"/>
<path fill="#0008ff" d="M387.2 202.0l6.8-0.9 6 1 6 2.8 7 5.5 5 5.5 4.9 6.1 14.1 20 2.2 4 1.5 4 1 4 0.3 4-0.7 6-2.2 7-3.5 7-7.5 13-2.8 7-0.9 4-0.3 4 0.4 15-0.3 5-1.2 6-2 4.9-2.6 4.1-3.4 4-4 3.6-4 2.8-4 2.3-4 1.6-5 1.2-4 0.4-7-0.6-6-2-6-3.1-6-4.5-5-5.3-3.5-5.4-2.2-6-0.6-5 0.1-4 1-5 7.7-22 1.8-7 0.9-6 0.3-6-0.1-6-2.2-18-0.5-8 0.5-8 1.6-8 3.2-8.5 2-3.5 3-3.9 3-3 4-2.9 4-2.1z"/>
<path fill="#0c00ff" d="M391.3 204.0l3.7 0 3 0.4 6 2.2 6 3.8 6 5.7 7.1 8.9 12.7 19 3.1 7 1 7-0.7 6-2.2 7-2.7 6-7.6 14-2.7 7-1.2 8-0.1 18-1.2 6-2 5-2.4 4-3.1 3.7-3.4 3.3-4.1 3-4.5 2.4-4 1.5-4 0.8-4 0.3-6-0.6-6-1.9-6-3.1-5.7-4.4-4.5-5-3.1-5-1.8-5-0.7-6 1.2-8 6.3-20 1.6-7 0.9-6 0.4-12-1.9-19-0.3-8 0.6-8 1.7-8 1.3-4 2.4-5 2.6-3.8 3-3.1 3-2.4 4-2.3 4-1.6z"/>
<path fill="#2300ff" d="M390.4 207.0l3.6-0.2 3 0.3 6 2 6.4 3.9 6.6 6.2 8 10.3 8.8 13.5 2.1 4 1.5 4 1 7-0.5 6-2 7-2.9 7-7.2 14-2.4 7-1.1 7-0.5 17-1.1 5-2 5-2.3 4-2.4 3-3 3.1-4 3-4 2.3-4 1.5-4 0.9-4 0.3-6-0.7-5-1.6-5.2-2.8-5.2-4-4.4-5-2.9-5-1.7-5-0.5-5 0.7-7 5.7-21 2-12 0.4-12-1.6-19-0.2-7 0.5-8 1.4-6.8 3-7.7 2.2-3.5 2.8-3.4 3-2.7 4-2.5 4-1.6z"/>
<path fill="#3900ff" d="M390.1 210.0l5.9-0.1 3 0.6 4 1.6 7 4.6 6 5.8 8 10.1 6.5 10.4 3.3 8 0.8 4 0.3 4-0.7 7-2 7-2.4 6-6.3 13-2.5 7-1.2 6-1.1 17-1.2 5-1.6 4-2.3 4-2.4 3-3 3-3.2 2.4-3 1.8-4 1.7-4 1.1-4 0.3-5-0.6-5.1-1.7-5.2-3-4.6-4-3.3-4-2.8-5-1.6-5-0.4-5 0.8-8 4.5-19 1.6-12 0.3-12-1.5-24 0.4-7 1.1-6 3.1-8 2.5-4 2.2-2.6 3-2.7 3-2 3.5-1.7z"/>
<path fill="#4f00ff" d="M389.9 213.0l3.1-0.4 3 0.1 3 0.7 4 1.7 7 4.8 7 6.9 7 8.9 4.7 8.3 2.8 8 0.9 8-0.7 7-1.8 7-2.2 6-6 13-2.5 7-1.1 6-1.5 15-1 4-1.6 4.1-4 6.2-3 3.1-3 2.4-3 1.8-4 1.7-4 0.9-3 0.2-5-0.6-4.7-1.8-4.3-2.8-4-3.7-3.3-4.5-2.4-5-1.3-5-0.4-5 0.8-8 3.8-18 1-10 0.3-13-1.1-23 0.3-6 0.9-5 1.3-4 1.8-4 4.3-5.9 3-2.7 3-2.1z"/>
<path fill="#6400ff" d="M390.0 216.0l3-0.5 3 0.1 3 0.7 4 1.8 7 5 8 7.9 5.3 7 3.6 7 2.3 8 0.7 8-0.6 7-1.6 7-1.8 5-6.5 15-2 6-2.8 18-1 4-1.6 4.1-4 6.2-5 4.6-6 3.1-3.5 1-3.5 0.3-4-0.5-4.6-1.8-4.3-3-2.9-3-2.8-4-2.3-5-1.4-5-0.4-5 0.6-8 2.7-15 1.1-11 0.3-13-0.9-22 0.2-5 0.8-5 2.6-7 4.2-6 5.1-4.3 3-1.7z"/>
<path fill="#7700ff" d="M390.4 219.0l2.6-0.5 3 0.1 3 0.7 3 1.3 7 4.8 8 7.9 4.9 6.7 3.1 6.4 2 7.6 0.6 8-0.6 7-1.3 6-2.1 6-7.4 18-1.6 6-2.6 13-2.1 6-3.8 6-4.3 4-5.8 3-3 0.8-3 0.2-4-0.6-3.2-1.4-3.8-2.7-2.9-3.3-2.5-4-1.7-4-1.2-5-0.3-5 0.3-6 1.8-15 0.9-13 0.2-12-0.7-19 1-9 2.1-6.1 3.9-5.9 5.1-4.5z"/>
<path fill="#8a00ff" d="M390.9 222.0l2.1-0.5 3 0 3 0.7 3 1.3 6.4 4.5 7 7 4.4 6 2.9 6 2 7 0.6 8-0.7 8-1.7 7-8.6 22-4.8 17-1.9 5-3.1 5-4.1 4-4.4 2.4-5 1.1-4-0.5-3-1.3-3-2.3-3-3.5-2.1-3.9-1.3-4-0.9-5-0.2-6 1.8-35-0.4-25 0.9-7 2.1-6 3.1-5 5-4.6z"/>
<path fill="#9c00ff" d="M391.5 225.0l2.5-0.5 3 0.1 5 1.9 6 4.4 6 6.1 4.3 6 2.7 6 1.5 6 0.6 7-0.7 8-1.9 8-8.9 23-5.6 16.1-2.9 4.9-3.1 3.3-4 2.5-5 1.1-4-0.7-3-1.7-2.4-2.5-2.4-4-1.4-4-1-5-0.5-6-0.1-9 0.9-27-0.3-19 0.9-8 2-6 3.3-5 4-3.7z"/>
<path fill="#ad00ff" d="M392.8 228.0l4.2-0.3 4 1.4 4.3 2.9 5.7 5.3 3.7 4.7 2.8 5 1.8 5 1.1 6 0.2 6-0.6 6.3-1.5 6.7-2.5 7.4-7 16.7-1 1.6-2 1.9-5 3.3-7 0.1-1-1-6 0-1-1-1 0-0.4-1-0.6-0.1-0.5-0.9-0.5-0.1-3-3.7-1-2.2-0.3-2 0.4-29-0.2-15 0.8-8 1.6-5 3.1-5 4.3-4z"/>
<path fill="#bd00ff" d="M394.9 232.0l3.1 0.1 3 1.2 4 2.7 5 4.7 2.6 3.3 2.2 4 1.5 4 1.1 5 0.3 5-0.3 6-0.8 5-1.4 5-3.2 7.7-5 9.5-1.1 1.8-1.9 0.8-19-2.6-1.8-1.2-0.6-2-0.7-12-0.4-22 0.1-6 0.7-5 1.7-5.4 3-4.6 4-3.5z"/>
<path fill="#cc00ff" d="M394.0 237.0l3-0.5 3 0.7 4 2.4 3.8 3.4 2.4 3 2.2 4 1.3 4 0.7 4 0.3 5-0.3 5-0.9 5-1.3 4-2.2 4.7-3 4.9-4 5.3-2 0.8-10-1.3-3-1-1.2-2.4-1.5-9-1.1-19 0.1-5 0.6-5 1.2-4 2.1-4 2.8-3.1z"/>
<path fill="#d900ff" d="M394.2 242.0l1.8-0.8 3 0 3 1.3 3.4 2.5 2.5 3 1.6 3 1.2 4 0.7 4 0.2 5-0.2 4-0.8 4-1.5 4-2.1 3.9-2.3 3.1-3.7 3.5-2 1-3-0.1-3-0.6-1.9-1.8-2.2-6-1.3-8-0.7-11 0.8-8 0.9-3 1.4-2.7 2-2.5z"/>
<path fill="#e500ff" d="M395.6 246.0l2.4-0.8 2 0.2 2 1 2 1.7 1.5 1.9 1.5 3 1.6 8-0.3 7-0.9 4-1.3 3-1.9 3-2.2 2.3-2 1-2 0.4-2-0.4-2-1-2-2.7-1.2-4.6-1.2-9 0-6 0.9-5 1.9-4z"/>
<path fill="#ef00ff" d="M396.9 249.0l1.1-0.3 2 0.3 1.5 1 1.5 1.8 1.4 3.2 1.5 7-0.1 4-2.2 7-2.6 3.7-2 0.8-3-0.6-1-0.6-0.9-1.3-2.2-11 0-4 1.1-6 1.5-3z"/>
<path fill="#f800ff" d="M396.6 253.0l1.4-0.8 1 0.2 1 0.6 1.1 2 2.2 7-0.3 4-2.4 6-1.6 1.8-1 0.2-1-0.4-1-1.7-1.6-5.9-0.4-3 0.2-3 1-4z"/>
<path fill="#fe00ff" d="M397.4 259.0l0.6-0.9 1 0.4 1.3 2.5 0.4 2-0.7 2.7-1 1.6-1 0.3-1-1.5-0.7-3.1 0.3-2z"/></g>
<rect x="323.0" y="195.8" width="44.3" height="38.7" fill="none" stroke="#7f9fb8" stroke-width=".7"/>
<rect x="326.7" y="255.3" width="38.6" height="40.1" fill="none" stroke="#7f9fb8" stroke-width=".7"/>
<rect x="424.3" y="187.3" width="44.6" height="40.1" fill="none" stroke="#7f9fb8" stroke-width=".7"/>
<rect x="424.1" y="284.6" width="44.9" height="40.7" fill="none" stroke="#7f9fb8" stroke-width=".7"/>
<rect x="409.4" y="374.2" width="38.7" height="31.6" fill="none" stroke="#7f9fb8" stroke-width=".7"/>
<rect x="380.2" y="120.0" width="44.2" height="27.0" fill="none" stroke="#7f9fb8" stroke-width=".7"/>
<rect x="300.0" y="128.0" width="23.0" height="16.4" fill="none" stroke="#7f9fb8" stroke-width=".7"/>
<rect x="290.0" y="174.6" width="28.8" height="44.8" fill="none" stroke="#7f9fb8" stroke-width=".7"/>
<rect x="490.0" y="118.0" width="30.0" height="20.2" fill="none" stroke="#7f9fb8" stroke-width=".7"/>
<rect x="490.2" y="187.5" width="29.8" height="39.8" fill="none" stroke="#7f9fb8" stroke-width=".7"/>
<rect x="270.0" y="344.7" width="19.5" height="27.3" fill="none" stroke="#7f9fb8" stroke-width=".7"/>
<rect x="496.4" y="248.8" width="23.6" height="44.6" fill="none" stroke="#7f9fb8" stroke-width=".7"/>
<rect x="499.0" y="344.5" width="21.0" height="36.0" fill="none" stroke="#7f9fb8" stroke-width=".7"/>
<rect x="326.8" y="368.0" width="41.4" height="18.0" fill="none" stroke="#7f9fb8" stroke-width=".7"/>
<rect x="336.8" y="462.4" width="43.7" height="17.6" fill="none" stroke="#7f9fb8" stroke-width=".7"/>
<rect x="485.0" y="429.3" width="35.0" height="28.7" fill="none" stroke="#7f9fb8" stroke-width=".7"/>
<rect x="454.8" y="458.0" width="29.1" height="22.0" fill="none" stroke="#7f9fb8" stroke-width=".7"/>
<rect x="285.0" y="247.3" width="14.6" height="43.7" fill="none" stroke="#7f9fb8" stroke-width=".7"/>
<path d="M398.5 245.1L399.8 245.3 401.1 245.7 402.4 246.5 404.6 248.6 406.3 251.2 407.4 254.1 408.1 257.2 408.4 260.3 408.6 264.9 408.4 267.9 407.8 270.8 406.8 273.7 405.2 276.5 403.2 279.1 400.8 281.2 398.4 282.5 397.2 282.8 396.1 282.7 395.1 282.2 394.1 281.5 393.3 280.4 392.1 277.7 391.2 274.6 390.1 268.2 389.7 263.6 389.6 259.0 390.1 254.4 391.1 251.5 391.7 250.2 393.6 247.7 394.7 246.6 395.9 245.8 397.2 245.3 398.5 245.1ZM396.5 227.3L397.8 227.5 400.5 228.5 403.1 230.0 405.6 231.9 409.1 235.1 411.2 237.3 415.0 242.1 416.6 244.7 417.9 247.3 419.0 250.1 419.8 253.0 420.7 258.9 420.8 264.9 420.3 269.4 419.5 273.8 418.4 278.1 417.1 282.4 415.0 288.0 409.2 302.0 405.9 310.5 403.9 314.6 402.4 317.3 400.5 319.7 398.3 321.9 397.1 322.7 394.4 324.0 393.0 324.3 390.2 324.4 387.6 323.8 386.5 323.2 384.5 321.4 382.9 319.1 381.6 316.3 380.7 313.2 379.1 305.3 378.4 299.1 378.1 291.6 378.8 267.9 378.7 249.6 379.2 245.2 380.3 240.8 382.1 236.7 383.9 234.2 387.2 230.8 389.7 229.0 392.3 227.8 393.7 227.5 396.5 227.3ZM394.4 215.4L397.2 215.8 399.9 216.6 402.6 217.8 406.5 220.3 410.3 223.3 413.8 226.5 418.2 231.0 421.1 234.6 423.6 238.3 425.1 240.9 426.4 243.5 427.9 247.7 428.7 250.5 429.5 254.8 429.8 257.8 429.9 262.2 429.7 265.2 429.1 269.6 428.2 274.0 427.3 276.8 425.1 282.4 419.6 294.8 417.6 300.5 416.7 304.8 415.4 315.3 414.6 319.8 413.4 324.1 411.6 328.3 409.2 332.2 407.2 334.5 405.0 336.7 402.4 338.5 398.3 340.8 395.4 341.8 392.4 342.5 389.5 342.6 385.4 342.0 381.5 340.4 377.9 338.0 375.7 336.0 373.8 333.7 371.2 329.9 369.8 327.2 368.7 324.3 367.8 321.3 367.3 318.3 367.0 313.8 367.6 307.8 369.9 295.9 370.6 291.4 371.5 281.0 371.9 273.6 371.9 267.7 371.0 250.9 371.0 244.7 371.4 238.7 372.4 234.4 373.9 230.2 376.1 226.3 379.0 222.7 381.2 220.6 384.9 218.0 387.5 216.7 391.6 215.6 394.4 215.4ZM393.4 203.8L396.3 204.1 399.2 204.7 402.0 205.6 406.1 207.6 408.6 209.2 412.2 212.0 414.4 214.1 417.5 217.3 422.8 224.5 433.8 240.7 436.2 244.5 438.2 248.5 439.1 251.3 439.9 255.6 440.0 258.5 439.8 261.5 439.3 264.4 438.5 267.3 436.9 271.6 434.2 277.2 426.9 290.4 425.1 294.4 423.8 298.5 423.3 301.4 423.0 305.7 423.2 317.8 423.0 323.9 422.5 326.8 421.8 329.7 420.8 332.6 419.5 335.3 417.1 339.2 414.2 342.8 412.0 345.0 409.6 347.0 405.9 349.5 401.8 351.6 397.6 353.1 393.3 353.9 388.9 354.0 385.9 353.7 383.0 353.1 380.2 352.3 377.4 351.3 374.6 350.0 372.0 348.4 368.2 345.8 365.9 343.7 363.8 341.5 361.8 339.2 360.1 336.7 358.6 334.1 357.4 331.4 356.6 328.6 356.2 325.8 356.1 323.0 356.6 318.6 357.5 314.2 362.4 299.4 364.0 293.5 365.3 287.7 366.2 281.9 366.6 276.0 366.5 270.1 364.7 250.4 364.5 242.9 364.6 238.4 365.1 234.0 365.9 229.5 367.1 225.2 368.7 221.0 370.8 217.0 373.4 213.4 376.7 210.2 380.5 207.5 384.6 205.5 388.9 204.3 393.4 203.8ZM396.2 192.6L399.0 193.0 403.2 194.4 407.1 196.5 410.6 199.3 414.5 203.8 422.7 214.8 433.5 227.1 437.3 231.8 440.0 235.5 442.4 239.3 444.5 243.3 445.7 246.1 447.1 250.3 447.7 253.1 448.2 257.4 448.1 260.3 447.7 263.2 447.0 266.1 446.0 269.0 444.1 273.2 440.2 280.1 431.6 292.7 429.7 296.6 428.7 299.2 427.9 303.4 427.6 307.9 427.9 313.9 429.0 324.7 429.1 330.6 428.8 333.5 428.1 336.3 427.2 339.0 425.8 341.5 424.2 344.0 422.4 346.4 418.1 350.9 412.1 356.1 408.3 358.8 405.6 360.4 400.2 363.2 394.7 365.0 391.8 365.6 389.0 365.9 384.7 365.9 380.5 365.3 377.6 364.5 374.9 363.4 370.7 361.3 366.8 358.8 361.7 355.0 358.2 352.0 355.0 348.7 352.2 345.3 350.6 342.8 349.2 340.1 348.1 337.3 346.9 333.0 346.4 330.1 346.1 327.1 346.1 324.1 346.7 319.7 348.3 314.0 350.7 308.4 356.4 297.5 358.3 293.4 360.4 287.8 361.7 282.0 362.2 276.1 362.0 270.2 361.2 264.3 358.0 249.4 357.5 244.9 357.4 241.9 357.6 237.4 358.4 231.5 359.9 225.6 361.8 219.9 364.2 214.4 367.2 209.2 370.8 204.4 375.1 200.2 377.6 198.4 380.2 196.7 383.0 195.2 385.9 194.1 388.8 193.2 391.7 192.7 396.2 192.6ZM376.8 381.6L379.8 383.0 381.2 383.4 384.1 383.8 385.5 383.7 388.3 383.1 391.1 382.2 393.7 380.8 400.1 376.7 414.7 366.1 428.7 356.6 433.2 352.7 435.9 349.3 438.0 345.5 438.9 342.8 439.7 338.5 439.7 335.6 439.4 332.7 438.8 329.7 434.8 316.1 433.8 311.7 433.4 307.3 433.9 303.0 435.3 298.9 436.6 296.3 438.2 293.7 440.9 290.0 448.8 280.8 450.6 278.4 452.1 275.9 453.5 273.3 454.5 270.5 455.3 267.5 456.1 263.0 456.3 256.9 455.8 252.3 455.2 249.4 454.3 246.5 452.6 242.3 451.2 239.7 448.9 236.0 444.3 230.0 434.3 218.7 429.6 212.9 426.4 207.9 420.3 196.0 417.8 192.2 415.9 189.9 413.7 187.7 411.3 185.8 407.5 183.2 404.8 181.8 402.0 180.7 397.6 179.6 393.2 179.3 390.3 179.5 387.3 180.0 384.4 180.9 381.7 182.0 379.0 183.3 376.4 184.9 374.1 186.8 371.9 188.8 369.0 192.1 365.9 197.0 362.7 203.8 353.1 226.4 351.3 232.0 350.7 234.9 350.4 237.7 350.5 242.1 351.1 246.5 355.3 263.0 356.4 268.9 356.7 273.4 356.6 276.3 356.2 280.6 355.7 283.5 354.0 289.0 351.4 294.2 348.2 299.3 341.1 309.3 338.7 313.2 337.3 315.9 336.1 318.7 335.1 321.5 334.2 326.0 333.9 329.0 334.0 333.6 334.4 336.6 335.0 339.5 336.0 342.3 337.2 345.0 338.6 347.6 340.4 349.9 343.5 353.0 348.2 356.6 357.3 362.1 367.7 367.9M371.3 397.4L372.1 397.8 373.9 399.6 375.7 402.3 377.3 405.3 378.8 409.8 379.3 412.7 379.3 415.6 378.9 418.4 378.0 421.3 376.8 424.3 375.2 427.2 373.2 429.8 371.0 431.7 368.9 432.7 368.0 432.7 367.2 432.4 366.6 431.7 366.2 430.7 365.6 428.1 365.4 422.7 366.0 414.0 367.0 405.5 368.2 400.5 369.2 398.3 369.8 397.7 370.5 397.4 371.3 397.4ZM366.7 448.1L370.6 447.0 374.9 445.5 379.2 443.6 382.0 442.1 386.0 439.4 388.5 437.4 390.7 435.3 392.5 433.0 394.6 429.2 395.9 425.1 396.6 420.8 398.2 408.8 399.6 403.0 401.0 398.7 403.4 393.1 405.5 389.2 408.8 384.2 411.6 380.8 414.7 377.6 416.9 375.7 421.8 372.2 427.1 369.3 439.6 363.3 444.8 360.2 448.2 357.2 450.2 354.9 451.8 352.4 453.4 348.3 454.0 345.6 454.0 342.8 453.6 340.1 452.7 337.4 450.9 333.3 443.8 320.8 441.1 315.0 440.2 312.1 439.5 309.2 439.3 306.4 439.6 303.7 439.9 302.4 440.9 299.9 443.2 296.3 446.3 293.0 456.7 283.3 458.7 281.1 460.5 278.8 462.7 275.1 463.8 272.5 465.2 268.4 466.0 264.0 466.4 258.0 466.1 253.4 465.6 250.4 464.0 244.4 461.6 238.8 459.3 234.9 456.5 231.4 453.4 228.3 445.5 221.4 442.3 218.3 439.4 215.0 437.7 212.6 435.5 208.7 433.6 204.6 432.0 200.4 427.8 187.5 425.9 183.5 424.4 181.0 422.6 178.7 420.5 176.6 418.1 174.6 414.2 172.1 408.7 169.5 405.8 168.5 401.5 167.5 395.6 166.9 389.6 167.0 385.2 167.6 382.2 168.3 376.4 170.2 373.6 171.4 371.0 172.9 367.4 175.7 365.2 177.8 363.3 180.1 361.6 182.5 360.1 185.1 358.9 187.8 357.5 192.0 355.4 203.6 354.2 207.9 352.0 213.6 346.7 224.8 345.0 229.0 343.7 233.3 342.9 237.5 342.9 241.8 343.3 244.7 344.0 247.5 345.3 251.9 349.5 263.7 350.7 268.1 351.3 271.0 351.7 275.4 351.6 278.3 351.3 281.2 350.6 283.9 349.1 287.9 347.7 290.4 346.0 292.8 343.2 296.2 334.7 305.3 330.9 310.2 328.4 314.1 326.3 318.1 324.4 322.2 323.0 326.5 322.0 330.8 321.4 335.2 321.3 338.1 321.5 342.6 321.9 345.6 323.0 350.0 324.1 352.8 325.5 355.4 327.1 357.8 330.2 360.8 334.0 363.0 338.3 364.7 350.1 368.6 352.9 369.8 355.5 371.2 359.0 373.8 360.9 375.9 362.6 378.3 363.9 381.2M374.9 458.1L393.2 451.5 398.7 449.1 402.7 447.1 408.0 443.9 411.7 441.1 415.1 437.9 417.8 434.4 419.2 431.9 420.1 429.2 420.6 426.4 420.6 423.4 420.3 420.4 419.7 417.3 416.1 404.0 415.5 399.6 415.6 396.7 416.0 393.7 416.9 390.8 419.2 386.6 421.1 384.1 423.4 382.1 424.6 381.3 425.9 380.7 428.5 379.8 431.3 379.2 434.3 379.0 445.1 379.0 449.8 378.7 452.8 378.1 455.8 377.3 458.6 376.3 461.3 375.0 463.8 373.5 466.1 371.8 468.2 369.8 470.0 367.6 471.5 365.2 472.7 362.6 473.6 359.9 474.3 357.0 474.7 354.0 474.8 350.9 474.6 347.8 474.1 344.8 473.4 341.7 472.5 338.8 470.6 334.6 468.1 330.7 465.1 327.3 461.6 324.5 454.2 319.3 450.9 316.1 449.0 313.6 447.6 310.8 446.8 307.9 446.7 306.5 446.8 305.1 447.5 302.3 448.8 299.9 449.7 298.7 451.9 296.8 460.9 290.6 466.7 285.7 469.8 282.4 471.6 280.1 474.1 276.5 475.4 274.0 477.1 270.1 478.0 267.3 478.5 264.5 478.9 261.5 478.9 258.5 478.8 255.4 478.4 252.3 477.4 247.6 475.6 241.5 473.3 235.8 471.4 231.9 469.1 228.5 467.1 226.6 464.9 224.9 454.1 218.7 450.1 216.1 446.6 213.2 443.8 209.9 442.6 207.4 441.9 204.7 441.6 200.3 441.9 191.0 441.6 186.3 440.5 180.3 439.1 176.0 437.8 173.3 436.4 170.8 434.7 168.4 432.9 166.3 429.6 163.4 427.3 161.7 424.7 160.2 420.6 158.3 414.8 156.3 408.8 154.8 402.7 153.8 396.7 153.3 390.6 153.2 384.6 153.7 380.2 154.4 374.5 155.9 370.3 157.4 364.9 159.9 361.0 162.2 357.4 164.9 354.0 167.9 351.0 171.3 348.6 175.0 347.3 177.7 346.4 180.4 345.6 184.9 345.7 191.0 346.6 200.3 346.8 204.8 346.7 207.6 346.2 210.3 345.2 213.0 343.9 215.6 337.7 224.8 335.5 228.8 334.2 233.0 333.7 235.8 333.5 238.6 333.7 241.5 334.1 244.4 335.6 250.1 337.2 254.4 339.2 258.7 345.1 269.6 346.3 272.3 347.1 275.1 347.2 276.4 347.0 279.2 346.1 281.8 345.4 283.0 343.7 285.3 341.6 287.5 333.3 294.7 328.8 298.9 323.5 304.4 319.7 309.0 316.3 313.7 314.0 317.4 311.3 322.6 309.7 326.7 308.0 332.4 306.9 338.4 306.3 344.5 306.3 350.7 306.7 356.9 308.0 364.3 309.5 370.0 311.5 375.3M340.0 469.6L346.0 470.1 360.8 472.0 365.2 472.2 371.1 471.7 376.9 470.7 391.7 467.4 408.0 464.3 428.2 459.3 435.6 457.7 441.6 456.7 453.8 455.3 459.8 454.1 464.0 452.6 468.0 450.6 471.6 448.1 475.0 445.1 478.1 441.8 480.7 438.2 483.0 434.4 485.5 429.0 487.7 421.9 489.2 414.6 492.6 388.8 496.3 368.4 497.2 359.4 497.3 354.9 497.2 350.3 496.7 345.8 496.0 341.3 494.4 335.5 490.3 324.2 488.6 318.5 487.1 311.1 486.6 305.2 486.9 299.4 487.6 295.0 488.7 290.6 492.3 279.1 493.8 271.7 494.3 267.3 494.6 261.3 494.4 256.8 494.0 250.8 492.8 241.7 490.9 231.3 489.5 225.5 487.6 220.0 485.6 216.0 484.0 213.5 482.0 211.2 476.6 205.5 474.6 203.2 473.0 200.8 471.8 198.2 471.1 195.4 470.7 191.0 471.0 180.3 470.9 175.7 470.5 172.8 469.7 169.9 467.9 165.8 465.5 162.0 462.5 158.6 458.1 154.5 453.2 151.1 446.6 147.6 439.6 144.9 432.3 142.9 423.4 141.0 412.9 139.5 404.0 138.9 395.0 138.8 386.1 139.4 375.7 140.9 365.3 143.0 353.6 146.2 346.6 148.9 341.4 151.7 337.8 154.4 335.7 156.5 333.7 158.8 331.2 162.5 329.8 165.2 328.1 169.4 327.4 172.3 326.8 176.8 326.7 181.3 327.1 185.9 328.7 199.2 328.8 203.5 328.6 206.4 328.1 209.2 327.2 212.0 322.1 223.2 320.6 227.5 319.5 231.8 319.0 237.7 319.4 243.6 320.6 249.4 322.7 255.2 327.9 265.2 329.7 269.4 330.4 272.2 330.6 273.6 330.2 276.2 329.1 278.5 327.3 280.6 319.0 287.4 315.5 290.4 311.3 294.7 308.3 298.0 304.6 302.7 302.2 306.4 299.2 311.5 297.3 315.5 295.6 319.6 294.2 323.8 293.0 328.1 292.0 332.5 290.6 341.6 288.2 362.7 286.9 371.3" fill="none" stroke="#00120c" stroke-width=".88" stroke-linejoin="round"/>
</g>
<polygon points="308.3,129.8 505.6,123.5 513.0,442.0 476.5,478.0 258.3,478.0" fill="none" stroke="#8c8cd8" stroke-width=".6" opacity=".8"/>
<polygon points="272.6,370.7 373,385.5 360.5,456 339.5,454.6 336.2,478 258.3,478" fill="#fff"/>
<path d="M270.5 372.8 L384.5 389.2" stroke="#8c8c8c" stroke-width="5.6"/><path d="M270.5 372.8 L384.5 389.2" stroke="#fff" stroke-width="4.2" />
<path d="M373.9 371.8 L359.6 478.0" stroke="#8c8c8c" stroke-width="6.0"/><path d="M373.9 371.8 L359.6 478.0" stroke="#fff" stroke-width="4.6" />
<path d="M340.2 452.6 L373.8 457.8" stroke="#8c8c8c" stroke-width="5.2"/><path d="M340.2 452.6 L373.8 457.8" stroke="#fff" stroke-width="3.8" />
<path d="M351.0 367.6 L349.2 381.0" stroke="#8c8c8c" stroke-width="3.8"/><path d="M351.0 367.6 L349.2 381.0" stroke="#fff" stroke-width="2.4" />
<path d="M271.5 373.0 L384.0 389.1" stroke="#fff" stroke-width="4.2" />
<path d="M373.8 372.5 L359.7 477.5" stroke="#fff" stroke-width="4.6" />
<path d="M340.4 452.6 L373.3 457.7" stroke="#fff" stroke-width="3.8" />
<path d="M347.6 393 L336.4 478" stroke="#8c8c8c" stroke-width="3.4"/><path d="M347.6 393 L336.4 478" stroke="#fff" stroke-width="2.2"/><path d="M347.6 393 L336.4 478" stroke="#9a9a9a" stroke-width="2.2" stroke-dasharray=".7 2.6"/>
<rect x="346.4" y="385.6" width="6" height="7.2" fill="#fff" stroke="#7a7a7a" stroke-width=".8"/>
<path d="M270.8 390.8L333.5 462.4M338 385.8L258.8 476.5" stroke="#9c9c9c" stroke-width=".7" stroke-dasharray="9 3"/>
<path d="M272.9 370 L258.3 478 L336 478" fill="none" stroke="#8c8c8c" stroke-width=".8"/>
<rect x="356" y="477.6" width="6.6" height="6" fill="#fff" stroke="#9a9a9a" stroke-width=".7"/>
<rect x="341.2" y="274.6" width="5.2" height="7.0" fill="#fff" stroke="#b4b4b4" stroke-width=".7"/>
<rect x="340.6" y="208.6" width="4.6" height="5.6" fill="#fff" stroke="#b4b4b4" stroke-width=".7"/>
<rect x="445.2" y="206.0" width="6.5" height="5.8" fill="#fff" stroke="#b4b4b4" stroke-width=".7"/>
<rect x="446.6" y="301.2" width="7.4" height="5.8" fill="#fff" stroke="#b4b4b4" stroke-width=".7"/>
<rect x="424.5" y="387.3" width="7.8" height="5.9" fill="#fff" stroke="#b4b4b4" stroke-width=".7"/>
<g transform="rotate(-8 294 261.5)"><rect x="289.6" y="256.2" width="9" height="10.8" fill="#fff" stroke="#c8c4f4" stroke-width=".8"/><rect x="290.8" y="258" width="6.4" height="6.8" fill="#fff" stroke="#8c8c8c" stroke-width=".7"/><path d="M290.8 258l6.4 6.800M297.200 258l-6.400 6.800" stroke="#8c8c8c" stroke-width=".6"/></g>
</svg>
<div class="abs" id="dlg" style="left:22px;top:95px;width:171px;height:149px;border-radius:3.500px 3.500px 0 0;background:#b5cde8;border:1px solid #6c7076;border-top-color:#a4a8ae;border-right-color:#2a9cc0;border-bottom-color:#101c20"></div>
<div class="abs" style="left:23px;top:96px;width:169px;height:18.500px;border-radius:2.500px 2.500px 0 0;background:linear-gradient(#a4bedf,#c0d5ec);border-top:1px solid #dce8f4"></div>
<div class="abs" style="left:23.800px;top:114px;width:167px;height:128px;background:#f0f0f0"></div>
<div class="abs" style="left:23px;top:242px;width:169px;height:1px;background:#46c8e6"></div>
<svg class="ic" style="left:25.700px;top:99.200px" width="12.200" height="12.200" viewBox="0 0 12 12"><rect x="0" y="0" width="12" height="12" rx=".8" fill="#cc141e"/><rect x=".4" y=".4" width="11.200" height="11.200" rx=".8" fill="none" stroke="#f04048" stroke-width=".5"/><g fill="#f2f6f6" stroke="#1a1a1a" stroke-width=".45" stroke-linejoin="round"><path d="M3.400 1.700h7.200l-.7 1.500H2.700z"/><path d="M3 3.800h7.200l-.6 1.400H2.400z"/><path d="M2.800 5.800h7l-.6 1.400H2.200z"/><path d="M2.900 7.900h2.800L4.100 10.600H1.500z"/><path d="M6.700 7.900h3.400L8.500 10.600H5.300z"/></g></svg>
<div class="abs jt" style="left:41px;top:99.600px;width:74.300px;font-size:8.880px;line-height:12px">Hipótesis y plantas</div>
<div class="cap capx" style="left:165px;top:99px;width:24.500px;height:12.800px"></div>
<svg class="ic" style="left:165px;top:99px" width="25" height="13" viewBox="0 0 25 13"><path d="M9.400 3.800l5.600 5M15 3.800l-5.600 5" stroke="#5a3030" stroke-width="3" stroke-linecap="round"/><path d="M9.400 3.800l5.600 5M15 3.800l-5.600 5" stroke="#fff" stroke-width="1.900" stroke-linecap="round"/></svg>
<!-- dialog toolbar -->
<svg class="ic" style="left:23px;top:114px" width="169" height="18" viewBox="23 114 169 18">
<defs><radialGradient id="gHelp2" cx=".4" cy=".3" r=".8"><stop offset="0" stop-color="#6aa0ff"/><stop offset=".6" stop-color="#1c4fd8"/><stop offset="1" stop-color="#0a2a90"/></radialGradient>
<radialGradient id="gBull" cx=".5" cy=".5" r=".5"><stop offset="0" stop-color="#d01010"/><stop offset=".2" stop-color="#c02010"/><stop offset=".45" stop-color="#6a8a10"/><stop offset=".62" stop-color="#10a020"/><stop offset=".85" stop-color="#089090"/><stop offset="1" stop-color="#08a0a0"/></radialGradient></defs>
<rect x="24.400" y="115.300" width="16.200" height="15.200" rx="2" fill="#e6e6e6" stroke="#808080" stroke-width=".9"/>
<circle cx="32.700" cy="122.300" r="5.700" fill="url(#gBull)"/>
<!-- icon2 -->
<rect x="43.200" y="119.400" width="1.600" height="1.600" fill="#e06070"/><rect x="44.600" y="121.400" width="3.400" height="4.600" fill="#606068"/><path d="M45.400 122.200c1.600.4 1.600 2.800 0 3.200" fill="none" stroke="#f0e010" stroke-width="1"/>
<rect x="48" y="117.400" width="4.400" height="5" fill="#606068"/><circle cx="50.200" cy="118.800" r=".9" fill="#f0e010"/><path d="M48.600 121.800c.4-1.800 2.800-1.800 3.200 0z" fill="#f0e010"/>
<path d="M46.200 116.400l1 2.400M52.600 117l2-1M52.800 120l2.400-.6" stroke="#b0b060" stroke-width=".8"/><path d="M52.600 117.400l2.200-1.400" stroke="#20b030" stroke-width="1"/>
<path d="M48.400 125.600c2.600.6 5.600-.6 7-2.800" fill="none" stroke="#d04050" stroke-width=".9"/>
<rect x="43.600" y="127.200" width="12.400" height="1.600" fill="#30c0c0"/><path d="M44 128h11" stroke="#802020" stroke-width="1.200" stroke-dasharray="1.200 1"/>
<!-- button 3 -->
<rect x="59" y="115.300" width="16" height="15.200" rx="2" fill="#e6e6e6" stroke="#808080" stroke-width=".9"/>
<circle cx="67" cy="121.800" r="5.200" fill="#a8e0e0" stroke="#40c0c0" stroke-width=".8"/><circle cx="67" cy="121.800" r="3.800" fill="#c0d8a0" stroke="#20b030" stroke-width=".9" stroke-dasharray="1.600 .8"/><rect x="65" y="119.800" width="4" height="4" fill="#d06070" stroke="#a09040" stroke-width=".7"/>
<rect x="61.400" y="127.200" width="11.600" height="1.600" fill="#30c0c0"/><path d="M61.800 128h10" stroke="#802020" stroke-width="1.200" stroke-dasharray="1.200 1"/>
<!-- button 4 -->
<rect x="76.800" y="115.300" width="15.800" height="15.200" rx="2" fill="#e6e6e6" stroke="#808080" stroke-width=".9"/>
<circle cx="84" cy="121.600" r="4.400" fill="#f4f0f8" stroke="#c8c8d0" stroke-width=".7"/><path d="M84.400 118.400c2 0 3.400 1.600 3.400 3.400-1 1.400-2.600 1.800-4 1.400z" fill="#40e0f0"/><path d="M81 119.600l2.600 1.200-1 2z" fill="#f8c8a0"/><path d="M84.800 117.800l1.800-.6" stroke="#30c040" stroke-width="1"/><path d="M88.200 118.400l1.800-.6" stroke="#f0a020" stroke-width="1"/><path d="M88.600 116.600l2-.8" stroke="#40b050" stroke-width=".9"/>
<path d="M87.200 124.600l3.400 3.600" stroke="#1050e0" stroke-width="2"/><path d="M86.800 124.200l1.200 1.200" stroke="#222" stroke-width="1"/><circle cx="90.200" cy="121.400" r=".6" fill="#c02020"/>
<rect x="79" y="127" width="2.600" height="1.800" fill="#b02020"/><rect x="81.800" y="127" width="2.800" height="1.800" fill="#f0a020"/><rect x="84.800" y="127" width="2.600" height="1.800" fill="#30a040"/>
<!-- icon 5 -->
<path d="M95.400 120.600c1.200-3.600 10.600-3.600 12 0-1.400 2-10.600 2-12 0z" fill="#111"/><path d="M95.600 119.800c1.600-3 9.800-3 11.600 0" fill="none" stroke="#c08830" stroke-width="1.200"/>
<path d="M97 120.400l2.400-.6.400 1.400-2.600.4zM104 119.800l2.400.6-.4 1.400-2.400-.6z" fill="#fff"/>
<rect x="96.400" y="121.800" width="10.800" height="6.400" fill="#c02010"/><path d="M95.600 127l1-.6M108 127l-1-.6" stroke="#c02010" stroke-width="1"/>
<g stroke="#f8e800" stroke-width="1.500"><path d="M98 122.400v5.800M100.600 122.400v5.800M103.200 122.400v5.800M105.800 122.400v5.800"/></g>
<g fill="#c02010"><rect x="97.400" y="128.400" width="1.200" height="1.200"/><rect x="100" y="128.400" width="1.200" height="1.200"/><rect x="102.600" y="128.400" width="1.200" height="1.200"/><rect x="105.200" y="128.400" width="1.200" height="1.200"/></g>
<!-- help -->
<circle cx="181.200" cy="122.800" r="5.700" fill="#e6ecf4" stroke="#b8c0cc" stroke-width=".6"/><circle cx="181.200" cy="122.800" r="4.600" fill="url(#gHelp2)"/>
<text x="178.900" y="125.700" font-size="8" font-weight="bold" fill="#fff" font-family="Liberation Sans">?</text>
</svg>
<!-- combos -->
<div class="combo" style="left:24.600px;top:133.700px;width:148px;height:15px"></div>
<div class="abs jt dt" style="left:27.300px;top:137.100px;width:59.300px;letter-spacing:-0.265px">Desplazamientos</div>
<div class="combo" style="left:24.600px;top:153.200px;width:148px;height:15px"></div>
<div class="abs jt dt" style="left:27.300px;top:156.500px;width:63.700px;letter-spacing:-0.175px">Desplazamiento Z</div>
<div class="combo hot" style="left:26.300px;top:189.200px;width:144.400px;height:15px"></div>
<div class="abs jt dt" style="left:29.500px;top:192.200px;width:111.400px;letter-spacing:-0.145px">E.L.S. Característica. Hormigón</div>
<svg class="ic" style="left:160px;top:134px" width="12" height="70" viewBox="160 134 12 70"><path d="M164 139.900h5.400l-2.700 3zM164 159.400h5.400l-2.700 3zM162.800 195.200h5.400l-2.700 3z" fill="#000"/></svg>
<!-- radios -->
<svg class="ic" style="left:24px;top:172px" width="80" height="13" viewBox="24 172 80 13">
<defs><radialGradient id="gRad" cx=".5" cy=".5" r=".5"><stop offset="0" stop-color="#fdfdfd"/><stop offset=".6" stop-color="#e8e8e8"/><stop offset="1" stop-color="#cfcfcf"/></radialGradient>
<radialGradient id="gDot" cx=".4" cy=".35" r=".7"><stop offset="0" stop-color="#9be0fb"/><stop offset=".5" stop-color="#1a7ac0"/><stop offset="1" stop-color="#0a3a70"/></radialGradient></defs>
<circle cx="30.800" cy="178.400" r="4.300" fill="url(#gRad)" stroke="#8e8f8f" stroke-width=".8"/>
<circle cx="90.400" cy="178.400" r="4.300" fill="url(#gRad)" stroke="#8e8f8f" stroke-width=".8"/><circle cx="90.400" cy="178.400" r="2.300" fill="url(#gDot)"/>
</svg>
<div class="abs jt dt" style="left:38.500px;top:174px;width:32px;letter-spacing:-0.215px">Hipótesis</div>
<div class="abs jt dt" style="left:98px;top:174px;width:63.750px;font-weight:bold;font-size:8.500px;letter-spacing:0.035px">Combinaciones</div>
<!-- list -->
<div class="abs" style="left:26.500px;top:205px;width:144.500px;height:40.200px;background:#fff;border:1px solid #e3e8ee;border-top-color:#9aa8b8"></div>
<div class="abs" style="left:27.300px;top:206px;width:143px;height:9px;background:#3399ff"></div>
<div class="abs jt dt" style="left:28.500px;top:206.100px;width:111.700px;color:#fff;letter-spacing:-0.145px">E.L.S. Característica. Hormigón</div>
<div class="abs jt dt" style="left:28.500px;top:215.900px;width:98.250px;letter-spacing:-0.154px">E.L.S. Frecuente. Hormigón</div>
<div class="abs jt dt" style="left:28.500px;top:225.600px;width:123.500px;letter-spacing:-0.210px">E.L.S. Cuasipermanente. Hormigón</div>
<div class="abs jt dt" style="left:28.500px;top:235.400px;width:59.750px;letter-spacing:-0.265px">Desplazamientos</div>
<div class="abs" style="left:22.200px;top:204.700px;width:153.300px;height:31.600px;border:1.200px solid #ff2a2a;border-radius:4.500px"></div>

<div id="scale" class="abs"></div>
<div id="scalegrad" class="abs"></div>
<div id="tabs" class="abs"></div>
<div id="status" class="abs"></div>
<div class="sl" style="left:42.6px">-2.68</div>
<div class="sl" style="left:105.2px">-2.42</div>
<div class="sl" style="left:167.8px">-2.15</div>
<div class="sl" style="left:230.4px">-1.88</div>
<div class="sl" style="left:293.0px">-1.61</div>
<div class="sl" style="left:355.6px">-1.34</div>
<div class="sl" style="left:418.2px">-1.08</div>
<div class="sl" style="left:480.8px">-0.81</div>
<div class="sl" style="left:543.4px">-0.54</div>
<div class="sl" style="left:606.0px">-0.27</div>
<div class="sl" style="left:696.8px;width:auto;text-align:left;color:#3c3c3c;letter-spacing:.15px">0mm</div>
<svg class="ic" style="left:6px;top:520px" width="756" height="15" viewBox="6 520 756 15"><rect x="6" y="520" width="756" height="2" fill="#fff"/><path d="M6.75 522.2 L16.25 532.3 H85 L94.5 522.2" fill="#f0f0f0" stroke="#404040" stroke-width=".8"/><path d="M85.5 522.2 L95.0 532.3 H160.5 L170.0 522.2" fill="#f0f0f0" stroke="#404040" stroke-width=".8"/><path d="M161.3 522.2 L170.8 532.3 H215.5 L225.0 522.2" fill="#f0f0f0" stroke="#404040" stroke-width=".8"/><path d="M267 522.2 L276.5 532.3 H320.5 L330.0 522.2" fill="#f0f0f0" stroke="#404040" stroke-width=".8"/><path d="M321 522.2 L330.5 532.3 H401 L410.5 522.2" fill="#f0f0f0" stroke="#404040" stroke-width=".8"/><path d="M6 522.3H762" stroke="#404040" stroke-width=".9"/><path d="M216 522.2 L225.5 532.3 H266.3 L275.8 522.2Z" fill="#fff" stroke="none"/><path d="M216 522.2 L225.5 532.3 H266.3 L275.8 522.2" fill="none" stroke="#404040" stroke-width=".8"/></svg>
<div class="tab" style="left:18.75px;width:63.25px">Entrada de pilares</div>
<div class="tab" style="left:97.5px;width:60.0px">Entrada de vigas</div>
<div class="tab" style="left:173.3px;width:39.19999999999999px">Resultados</div>
<div class="tab" style="left:228px;width:35.30000000000001px">Isovalores</div>
<div class="tab" style="left:279px;width:38.5px">Deformada</div>
<div class="tab" style="left:333px;width:65px">Seguridad y salud</div>
<div class="abs" style="left:8px;top:537px;font-size:7.9px;line-height:10px;white-space:nowrap;width:120px;letter-spacing:-0.17px;text-align:justify;text-align-last:justify">CYPECAD - CYPE Ingenieros, S.A.</div>
<div class="abs" style="left:6px;top:533.3px;width:755px;height:1px;background:#c6c6c6"></div>
<div class="abs" style="left:664px;top:535px;width:96px;height:12px;border-top:1px solid #b4b4b4;border-left:1px solid #b4b4b4;border-right:1px solid #fafafa;border-bottom:1px solid #fafafa"></div>
<div class="abs" style="left:8px;top:535px;width:654px;height:12px;border-top:1px solid #b4b4b4;border-left:1px solid #d8d8d8;border-right:1px solid #fafafa;border-bottom:1px solid #fafafa"></div>
<div class="abs" style="left:667.5px;top:537px;font-size:7.9px;line-height:10px;white-space:nowrap;width:47.5px;text-align:justify;text-align-last:justify">1: Planta baja</div>

</body></html>
